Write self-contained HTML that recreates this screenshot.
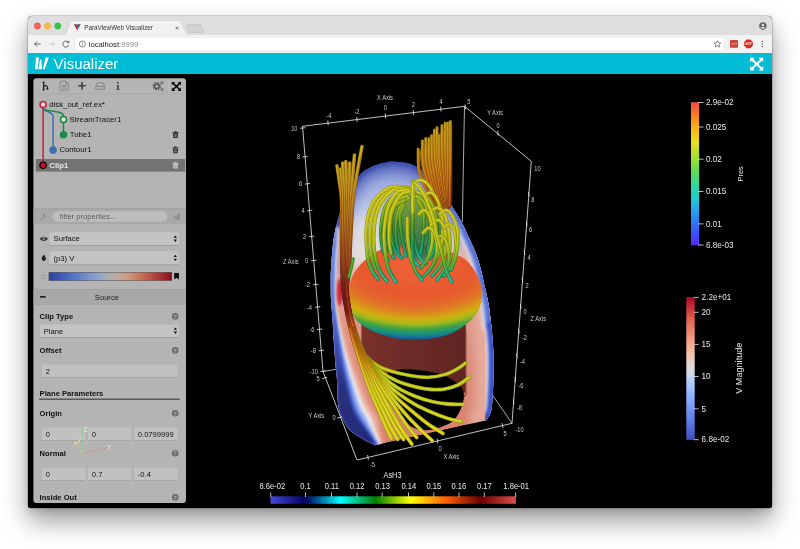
<!DOCTYPE html>
<html>
<head>
<meta charset="utf-8">
<title>ParaViewWeb Visualizer</title>
<style>
html,body{margin:0;padding:0;background:#fff;}
body{width:800px;height:549px;overflow:hidden;position:relative;font-family:"Liberation Sans",sans-serif;}
#win{position:absolute;left:28px;top:16px;width:743.5px;height:492px;background:#000;border-radius:4px 4px 2.5px 2.5px;box-shadow:0 13px 26px 0 rgba(0,0,0,.40),0 0 0 .5px rgba(0,0,0,.25),0 3px 7px rgba(0,0,0,.12);overflow:hidden;}
#in{will-change:transform;position:absolute;left:-28px;top:-16px;width:800px;height:549px;}
#in div,#in svg{position:absolute;}
#tabbar{left:28px;top:16px;width:745px;height:19px;background:#dedede;}
#toolbar{left:28px;top:35px;width:745px;height:18px;background:#f2f2f2;}
#hdr{left:28px;top:53.4px;width:745px;height:20.8px;background:#00bcd4;}
.tl{top:22.8px;width:6.4px;height:6.4px;border-radius:50%;}
#url{left:75px;top:37.3px;width:649.2px;height:13.4px;background:#fff;border-radius:2px;box-shadow:0 0 0 .5px rgba(0,0,0,.12);}
#in .t{white-space:nowrap;color:#151515;line-height:1;}
.b{font-weight:bold;}
.sel{background:#c3c3c3;border-radius:2px;box-shadow:0 1px 1px rgba(0,0,0,.3);}
.inp{background:#c1c1c1;box-shadow:0 1px 0 rgba(0,0,0,.2);}
.q{width:6.6px;height:6.6px;border-radius:50%;background:#6e6e6e;color:#b9b9b9;font-size:6px;font-weight:bold;text-align:center;line-height:7px;}
</style>
</head>
<body>
<div id="win"><div id="in">
<div id="tabbar"></div>
<div id="toolbar"></div>
<div id="hdr"></div>
<svg style="left:0;top:0" width="800" height="80" viewBox="0 0 800 80">
  <!-- active tab -->
  <path d="M62 35 C65.5 35 66 33 67.2 30 L70.2 22.5 C71 20.8 71.6 20.5 73.5 20.5 L178 20.5 C180 20.5 180.6 20.8 181.4 22.5 L184.6 30 C185.8 33 186.3 35 190 35 Z" fill="#f2f2f2" stroke="#c4c4c4" stroke-width=".5"/>
  <rect x="62" y="34.7" width="130" height="1" fill="#f2f2f2"/>
  <!-- new tab button -->
  <path d="M187 24.6 L199.6 24.6 C200.6 24.6 201 24.9 201.4 25.8 L203.6 31 C204 32 203.6 32.6 202.6 32.6 L190.6 32.6 C189.6 32.6 189.2 32.3 188.8 31.4 L186.4 25.8 C186.1 25 186.3 24.6 187 24.6Z" fill="#d2d2d2" stroke="#bdbdbd" stroke-width=".5"/>
  <!-- traffic lights -->
  <circle cx="37.4" cy="26" r="3.15" fill="#fc605b" stroke="#df4744" stroke-width=".4"/>
  <circle cx="47.6" cy="26" r="3.15" fill="#fdbc40" stroke="#de9f34" stroke-width=".4"/>
  <circle cx="57.8" cy="26" r="3.15" fill="#34c84a" stroke="#27aa35" stroke-width=".4"/>
  <!-- favicon -->
  <g transform="translate(74,24.3)">
    <path d="M0 0 L2.2 0 L3.6 4.2 L3.2 6.3Z" fill="#c8102e"/>
    <path d="M2.2 0 L4.3 0 L4.3 2.9 L3.6 4.2Z" fill="#1f7a3a"/>
    <path d="M4.3 0 L6.8 0 L3.2 6.3 L3.6 4.2 L4.3 2.9Z" fill="#2c4fa3"/>
  </g>
  <text x="84.3" y="30" font-family="Liberation Sans, sans-serif" font-size="6.3" fill="#333">ParaViewWeb Visualizer</text>
  <path d="M175.6 26.7 l2.8 2.8 m0 -2.8 l-2.8 2.8" stroke="#5a5a5a" stroke-width=".75" fill="none"/>
  <!-- profile icon -->
  <circle cx="762.9" cy="26" r="3.7" fill="#5f6368"/>
  <circle cx="762.9" cy="24.9" r="1.25" fill="#dedede"/>
  <path d="M760.4 28.2 C760.4 26.6 765.4 26.6 765.4 28.2 L765.4 28.6 L760.4 28.6Z" fill="#dedede"/>
  <!-- url box -->
  <rect x="75" y="37.3" width="649.2" height="13.4" rx="2" fill="#fff" stroke="#dcdcdc" stroke-width=".5"/>
  <!-- nav arrows -->
  <path d="M40.6 44 L34.6 44 M37.2 41.3 L34.5 44 L37.2 46.7" stroke="#5a5a5a" stroke-width=".9" fill="none"/>
  <path d="M48.6 44 L54.6 44 M52 41.3 L54.7 44 L52 46.7" stroke="#c9c9c9" stroke-width=".9" fill="none"/>
  <path d="M68.3 42.4 A3 3 0 1 0 68.7 45" stroke="#5a5a5a" stroke-width=".9" fill="none"/>
  <path d="M69.2 40.6 L69.2 43.1 L66.7 43.1Z" fill="#5a5a5a"/>
  <!-- info icon -->
  <circle cx="82.4" cy="44" r="3" fill="none" stroke="#5a5a5a" stroke-width=".7"/>
  <path d="M82.4 43.5 v2.2 M82.4 42.1 v.7" stroke="#5a5a5a" stroke-width=".7"/>
  <text x="88.8" y="46.7" font-family="Liberation Sans, sans-serif" font-size="7.66" fill="#222">localhost<tspan fill="#8a8a8a">:9999</tspan></text>
  <!-- star -->
  <path d="M717.4 40.6 l1 2.2 2.4 .25 -1.8 1.6 .5 2.4 -2.1 -1.25 -2.1 1.25 .5 -2.4 -1.8 -1.6 2.4 -.25z" fill="none" stroke="#5a5a5a" stroke-width=".7" stroke-linejoin="round"/>
  <!-- extension red -->
  <rect x="730" y="39.9" width="8" height="7.8" rx="1" fill="#c8473c"/>
  <path d="M731.6 43.8 h1.2 m.8 0 h1.2 m.8 0 h1.2" stroke="#f4d6d2" stroke-width="1"/>
  <!-- abp -->
  <path d="M746.7 39.6 h3.6 l2.5 2.5 v3.6 l-2.5 2.5 h-3.6 l-2.5 -2.5 v-3.6z" fill="#d9291c"/>
  <text x="748.5" y="45" text-anchor="middle" font-family="Liberation Sans, sans-serif" font-size="3.4" font-weight="bold" fill="#f6c9c4">ABP</text>
  <!-- menu dots -->
  <circle cx="762.3" cy="41.4" r=".75" fill="#5a5a5a"/><circle cx="762.3" cy="44" r=".75" fill="#5a5a5a"/><circle cx="762.3" cy="46.6" r=".75" fill="#5a5a5a"/>
  <!-- header logo -->
  <g fill="#fff">
    <path d="M36 57.4 L39 57.4 L37.5 69.3 L35 69.3Z"/>
    <path d="M40.1 59.5 L41.4 59.5 L41.9 69.3 L38.3 69.3Z"/>
    <path d="M45.5 57.4 L48.8 57.4 L44.8 69.3 L42.7 69.3Z"/>
  </g>
  <text x="53.6" y="68.9" font-family="Liberation Sans, sans-serif" font-size="15" fill="#fff">Visualizer</text>
  <!-- expand icon -->
  <g fill="#fff" stroke="none">
    <path d="M750.1 57.7 h4.6 l-1.5 1.5 3.5 3.4 3.5 -3.4 -1.5 -1.5 h4.6 v4.6 l-1.5 -1.5 -3.5 3.3 3.5 3.3 1.5 -1.5 v4.6 h-4.6 l1.5 -1.5 -3.5 -3.4 -3.5 3.4 1.5 1.5 h-4.6 v-4.6 l1.5 1.5 3.5 -3.3 -3.5 -3.3 -1.5 1.5z"/>
  </g>
</svg>
<svg style="left:0;top:0" width="800" height="549" viewBox="0 0 800 549" font-family="Liberation Sans, sans-serif">
<defs>
<clipPath id="shellclip"><path d="M390.4 161.4 C393.3 161.7 403.1 161.9 408.0 163.2 C412.9 164.4 415.5 165.9 420.0 168.9 C424.5 171.9 429.9 175.2 435.0 181.0 C440.1 186.8 446.2 197.4 450.5 204.0 C454.8 210.6 457.3 214.5 460.5 220.3 C463.7 226.1 466.8 233.2 469.5 239.0 C472.2 244.8 474.5 249.5 476.5 255.0 C478.5 260.5 480.1 266.5 481.5 272.0 C482.9 277.5 483.8 282.5 485.0 288.0 C486.2 293.5 487.7 298.8 488.7 305.0 C489.7 311.2 490.5 318.3 491.2 325.0 C492.0 331.7 492.6 338.3 493.0 345.0 C493.4 351.7 493.6 358.3 493.6 365.0 C493.6 371.7 493.4 379.2 493.2 385.0 C493.0 390.8 492.8 395.6 492.4 400.0 C492.0 404.4 492.0 408.1 491.0 411.5 C490.0 414.9 487.2 418.8 486.5 420.3 L375.3 445.3 C373.2 444.2 366.9 441.5 362.7 439.0 C358.5 436.5 353.4 433.9 350.0 430.3 C346.6 426.8 344.0 421.9 342.0 417.7 C340.0 413.5 339.0 411.3 338.2 405.0 C337.4 398.7 337.4 386.7 337.0 380.0 C336.6 373.3 336.0 370.8 335.5 365.0 C335.0 359.2 334.5 352.5 334.0 345.0 C333.5 337.5 333.0 327.5 332.5 320.0 C332.0 312.5 331.3 305.8 331.0 300.0 C330.7 294.2 330.7 290.2 330.7 285.0 C330.7 279.8 330.5 276.5 331.0 269.0 C331.5 261.5 332.2 248.8 333.5 240.0 C334.8 231.2 336.4 223.8 338.8 216.0 C341.2 208.2 344.2 200.1 348.0 193.0 C351.8 185.9 356.8 178.0 361.5 173.3 C366.2 168.6 371.2 167.0 376.0 165.0 C380.8 163.0 388.0 162.0 390.4 161.4Z"/></clipPath>
<filter id="b1" x="-20%" y="-20%" width="140%" height="140%"><feGaussianBlur stdDeviation="1"/></filter>
<filter id="b15" x="-20%" y="-20%" width="140%" height="140%"><feGaussianBlur stdDeviation="1.5"/></filter>
<filter id="b2" x="-20%" y="-20%" width="140%" height="140%"><feGaussianBlur stdDeviation="2.2"/></filter>
<filter id="b4" x="-30%" y="-30%" width="160%" height="160%"><feGaussianBlur stdDeviation="4"/></filter>
<filter id="b7" x="-30%" y="-30%" width="160%" height="160%"><feGaussianBlur stdDeviation="7"/></filter>
<filter id="soft" x="-5%" y="-5%" width="110%" height="110%"><feGaussianBlur stdDeviation="0.45"/></filter>
<linearGradient id="shellbase" gradientUnits="userSpaceOnUse" x1="0" y1="161" x2="0" y2="445">
<stop offset="0" stop-color="#7c8ed4"/><stop offset=".085" stop-color="#a2b0e2"/><stop offset=".155" stop-color="#bac4e8"/><stop offset=".243" stop-color="#d2d5e6"/><stop offset=".33" stop-color="#e2d4d0"/><stop offset=".42" stop-color="#e8b8a8"/><stop offset=".525" stop-color="#e0988a"/><stop offset="1" stop-color="#d87e6c"/></linearGradient>
<radialGradient id="diskg" gradientUnits="userSpaceOnUse" cx="416" cy="262" r="78" gradientTransform="translate(416 262) scale(1.73 1) translate(-416 -262)">
<stop offset="0" stop-color="#ee5e34"/><stop offset=".42" stop-color="#e8582f"/><stop offset=".55" stop-color="#e4662c"/><stop offset=".64" stop-color="#e07e24"/><stop offset=".74" stop-color="#d2ae10"/><stop offset=".80" stop-color="#a4b81c"/><stop offset=".86" stop-color="#44a440"/><stop offset=".94" stop-color="#0f8a8c"/><stop offset=".985" stop-color="#1c5a9c"/><stop offset="1" stop-color="#203e84"/></radialGradient>
<linearGradient id="cylg" gradientUnits="userSpaceOnUse" x1="361" y1="0" x2="467" y2="0"><stop offset="0" stop-color="#7a322c"/><stop offset=".5" stop-color="#6c2a26"/><stop offset="1" stop-color="#5e2522"/></linearGradient>
<linearGradient id="lb" gradientUnits="userSpaceOnUse" x1="0" y1="146" x2="0" y2="445">
<stop offset="0" stop-color="#ba9a0e"/><stop offset=".12" stop-color="#b08410"/><stop offset=".25" stop-color="#9c5a12"/><stop offset=".38" stop-color="#8c3e14"/><stop offset=".48" stop-color="#7e2016"/><stop offset=".555" stop-color="#8a2416"/><stop offset=".61" stop-color="#b85016"/><stop offset=".68" stop-color="#cc7814"/><stop offset=".75" stop-color="#cfa012"/><stop offset=".82" stop-color="#ccc012"/><stop offset="1" stop-color="#d4cc10"/></linearGradient>
<linearGradient id="lbh" gradientUnits="userSpaceOnUse" x1="0" y1="146" x2="0" y2="445">
<stop offset="0" stop-color="#dcc03c"/><stop offset=".25" stop-color="#c88a30"/><stop offset=".45" stop-color="#a84428"/><stop offset=".55" stop-color="#a83828"/><stop offset=".64" stop-color="#eaa030"/><stop offset=".7" stop-color="#d8e040"/><stop offset="1" stop-color="#f0ec50"/></linearGradient>
<linearGradient id="rb" gradientUnits="userSpaceOnUse" x1="418" y1="120" x2="452" y2="215">
<stop offset="0" stop-color="#b8960e"/><stop offset=".3" stop-color="#b8840e"/><stop offset=".55" stop-color="#bc680e"/><stop offset=".75" stop-color="#ac4a0e"/><stop offset="1" stop-color="#8e300e"/></linearGradient>
<linearGradient id="fy" gradientUnits="userSpaceOnUse" x1="0" y1="181" x2="0" y2="285">
<stop offset="0" stop-color="#c4be10"/><stop offset=".48" stop-color="#bcb80e"/><stop offset=".66" stop-color="#a2b014"/><stop offset=".79" stop-color="#5aa020"/><stop offset=".9" stop-color="#1c9a60"/><stop offset="1" stop-color="#10b89c"/></linearGradient>
<linearGradient id="fyh" gradientUnits="userSpaceOnUse" x1="0" y1="181" x2="0" y2="285">
<stop offset="0" stop-color="#e0dc40"/><stop offset=".4" stop-color="#dad83c"/><stop offset=".6" stop-color="#c4d840"/><stop offset=".78" stop-color="#70c050"/><stop offset="1" stop-color="#40e0c0"/></linearGradient>
<linearGradient id="fg" gradientUnits="userSpaceOnUse" x1="0" y1="190" x2="0" y2="262">
<stop offset="0" stop-color="#a8b814"/><stop offset=".3" stop-color="#7aa416"/><stop offset=".55" stop-color="#3a8a20"/><stop offset=".8" stop-color="#128a58"/><stop offset="1" stop-color="#10a890"/></linearGradient>
<linearGradient id="massg" gradientUnits="userSpaceOnUse" x1="0" y1="188" x2="0" y2="262">
<stop offset="0" stop-color="#86a014"/><stop offset=".4" stop-color="#3e7c18"/><stop offset=".7" stop-color="#16602c"/><stop offset="1" stop-color="#0c8670"/></linearGradient>
<linearGradient id="lbd" gradientUnits="userSpaceOnUse" x1="0" y1="146" x2="0" y2="445">
<stop offset="0" stop-color="#8a6c08"/><stop offset=".2" stop-color="#84520c"/><stop offset=".4" stop-color="#6c2c0e"/><stop offset=".48" stop-color="#5a1410"/><stop offset=".555" stop-color="#601810"/><stop offset=".62" stop-color="#9a4a0c"/><stop offset=".72" stop-color="#946808"/><stop offset=".82" stop-color="#989408"/><stop offset="1" stop-color="#a49c08"/></linearGradient>
<linearGradient id="lbg" gradientUnits="userSpaceOnUse" x1="0" y1="146" x2="0" y2="445">
<stop offset="0" stop-color="#c9a412"/><stop offset=".5" stop-color="#7e2016"/><stop offset=".575" stop-color="#8a3a14"/><stop offset=".615" stop-color="#5a901a"/><stop offset=".66" stop-color="#7cb018"/><stop offset=".73" stop-color="#b0c414"/><stop offset="1" stop-color="#c8cc12"/></linearGradient>
<linearGradient id="rbd" gradientUnits="userSpaceOnUse" x1="418" y1="120" x2="452" y2="215">
<stop offset="0" stop-color="#8c6c08"/><stop offset=".5" stop-color="#905408"/><stop offset="1" stop-color="#702808"/></linearGradient>
<linearGradient id="fyd" gradientUnits="userSpaceOnUse" x1="0" y1="181" x2="0" y2="285">
<stop offset="0" stop-color="#9a9408"/><stop offset=".5" stop-color="#8c8c08"/><stop offset=".68" stop-color="#6a800c"/><stop offset=".8" stop-color="#2e7018"/><stop offset=".9" stop-color="#0e6c48"/><stop offset="1" stop-color="#0a8470"/></linearGradient>
<linearGradient id="fgd" gradientUnits="userSpaceOnUse" x1="0" y1="190" x2="0" y2="262">
<stop offset="0" stop-color="#747e0c"/><stop offset=".3" stop-color="#4c700e"/><stop offset=".55" stop-color="#225c14"/><stop offset=".8" stop-color="#0a5c3c"/><stop offset="1" stop-color="#0a7464"/></linearGradient>
<linearGradient id="fgh" gradientUnits="userSpaceOnUse" x1="0" y1="190" x2="0" y2="262">
<stop offset="0" stop-color="#ccd840"/><stop offset=".4" stop-color="#90c038"/><stop offset=".7" stop-color="#48a848"/><stop offset="1" stop-color="#30d0b0"/></linearGradient>
<linearGradient id="navyg" gradientUnits="userSpaceOnUse" x1="0" y1="228" x2="0" y2="446"><stop offset="0" stop-color="#6c82d6"/><stop offset=".3" stop-color="#5a70cc"/><stop offset=".45" stop-color="#4a5ec0"/><stop offset=".6" stop-color="#3846a4"/><stop offset=".72" stop-color="#28327f"/><stop offset="1" stop-color="#232b78"/></linearGradient>
<linearGradient id="navyg2" gradientUnits="userSpaceOnUse" x1="0" y1="228" x2="0" y2="446"><stop offset="0" stop-color="#8096e0"/><stop offset=".3" stop-color="#7088dc"/><stop offset=".5" stop-color="#4a5cc8"/><stop offset="1" stop-color="#3b4cc0"/></linearGradient>
<linearGradient id="lgA" x1="0" y1="0" x2="1" y2="0"><stop offset="0" stop-color="#4747db"/><stop offset=".143" stop-color="#00005c"/><stop offset=".285" stop-color="#00ffff"/><stop offset=".429" stop-color="#008000"/><stop offset=".571" stop-color="#ffff00"/><stop offset=".714" stop-color="#ff6100"/><stop offset=".857" stop-color="#6b0000"/><stop offset="1" stop-color="#e04d4d"/></linearGradient>
<linearGradient id="lgP" x1="0" y1="1" x2="0" y2="0"><stop offset="0" stop-color="#5a2df0"/><stop offset=".08" stop-color="#3a50f8"/><stop offset=".2" stop-color="#2a8cf0"/><stop offset=".32" stop-color="#20c8d8"/><stop offset=".42" stop-color="#30d8a0"/><stop offset=".52" stop-color="#60dc50"/><stop offset=".62" stop-color="#a8e030"/><stop offset=".72" stop-color="#e8e020"/><stop offset=".82" stop-color="#f8b418"/><stop offset=".92" stop-color="#f87820"/><stop offset="1" stop-color="#f04848"/></linearGradient>
<linearGradient id="lgV" x1="0" y1="1" x2="0" y2="0"><stop offset="0" stop-color="#3b4cc0"/><stop offset=".15" stop-color="#6282ea"/><stop offset=".3" stop-color="#8db0fe"/><stop offset=".42" stop-color="#b8d0f9"/><stop offset=".5" stop-color="#dddddd"/><stop offset=".6" stop-color="#f5c4ad"/><stop offset=".72" stop-color="#f4987a"/><stop offset=".85" stop-color="#de604d"/><stop offset="1" stop-color="#b40426"/></linearGradient>
</defs>
<g stroke="#e2e2e2" stroke-width=".8" fill="none" opacity=".95">
<path d="M464.5 106.3 L462.3 222"/>
<path d="M323 371.4 L336 369.4"/>
<path d="M512 423.3 L492.4 395"/>
</g>
<g clip-path="url(#shellclip)">
<path d="M390.4 161.4 C393.3 161.7 403.1 161.9 408.0 163.2 C412.9 164.4 415.5 165.9 420.0 168.9 C424.5 171.9 429.9 175.2 435.0 181.0 C440.1 186.8 446.2 197.4 450.5 204.0 C454.8 210.6 457.3 214.5 460.5 220.3 C463.7 226.1 466.8 233.2 469.5 239.0 C472.2 244.8 474.5 249.5 476.5 255.0 C478.5 260.5 480.1 266.5 481.5 272.0 C482.9 277.5 483.8 282.5 485.0 288.0 C486.2 293.5 487.7 298.8 488.7 305.0 C489.7 311.2 490.5 318.3 491.2 325.0 C492.0 331.7 492.6 338.3 493.0 345.0 C493.4 351.7 493.6 358.3 493.6 365.0 C493.6 371.7 493.4 379.2 493.2 385.0 C493.0 390.8 492.8 395.6 492.4 400.0 C492.0 404.4 492.0 408.1 491.0 411.5 C490.0 414.9 487.2 418.8 486.5 420.3 L375.3 445.3 C373.2 444.2 366.9 441.5 362.7 439.0 C358.5 436.5 353.4 433.9 350.0 430.3 C346.6 426.8 344.0 421.9 342.0 417.7 C340.0 413.5 339.0 411.3 338.2 405.0 C337.4 398.7 337.4 386.7 337.0 380.0 C336.6 373.3 336.0 370.8 335.5 365.0 C335.0 359.2 334.5 352.5 334.0 345.0 C333.5 337.5 333.0 327.5 332.5 320.0 C332.0 312.5 331.3 305.8 331.0 300.0 C330.7 294.2 330.7 290.2 330.7 285.0 C330.7 279.8 330.5 276.5 331.0 269.0 C331.5 261.5 332.2 248.8 333.5 240.0 C334.8 231.2 336.4 223.8 338.8 216.0 C341.2 208.2 344.2 200.1 348.0 193.0 C351.8 185.9 356.8 178.0 361.5 173.3 C366.2 168.6 371.2 167.0 376.0 165.0 C380.8 163.0 388.0 162.0 390.4 161.4Z" fill="url(#shellbase)"/>
<ellipse cx="366" cy="246" rx="20" ry="30" fill="#e4e2e4" opacity=".55" filter="url(#b7)"/>
<ellipse cx="352" cy="288" rx="12" ry="26" fill="#ecb8a8" opacity=".7" filter="url(#b4)"/>
<path d="M331.0 275.0 C331.0 272.8 330.6 267.8 331.0 262.0 C331.4 256.2 332.2 247.7 333.5 240.0 C334.8 232.3 336.4 223.8 338.8 216.0 C341.2 208.2 344.2 200.1 348.0 193.0 C351.8 185.9 356.8 178.0 361.5 173.3 C366.2 168.6 371.2 167.0 376.0 165.0 C380.8 163.0 385.1 161.7 390.4 161.4 C395.7 161.1 403.1 161.9 408.0 163.2 C412.9 164.4 415.5 165.9 420.0 168.9 C424.5 171.9 429.9 175.2 435.0 181.0 C440.1 186.8 446.2 197.4 450.5 204.0 C454.8 210.6 457.3 214.5 460.5 220.3 C463.7 226.1 466.8 233.2 469.5 239.0 C472.2 244.8 475.3 252.3 476.5 255.0" fill="none" stroke="#3f4fb0" stroke-width="17" filter="url(#b7)" opacity=".78"/>
<path d="M331.0 275.0 C331.0 272.8 330.6 267.8 331.0 262.0 C331.4 256.2 332.2 247.7 333.5 240.0 C334.8 232.3 336.4 223.8 338.8 216.0 C341.2 208.2 344.2 200.1 348.0 193.0 C351.8 185.9 356.8 178.0 361.5 173.3 C366.2 168.6 371.2 167.0 376.0 165.0 C380.8 163.0 385.1 161.7 390.4 161.4 C395.7 161.1 403.1 161.9 408.0 163.2 C412.9 164.4 415.5 165.9 420.0 168.9 C424.5 171.9 429.9 175.2 435.0 181.0 C440.1 186.8 446.2 197.4 450.5 204.0 C454.8 210.6 457.3 214.5 460.5 220.3 C463.7 226.1 466.8 233.2 469.5 239.0 C472.2 244.8 475.3 252.3 476.5 255.0" fill="none" stroke="#3a4aae" stroke-width="6.5" filter="url(#b2)"/>
<g stroke-linecap="round" fill="none">
<path d="M469.5 239.0 C470.7 241.7 474.5 249.5 476.5 255.0 C478.5 260.5 480.1 266.5 481.5 272.0 C482.9 277.5 483.8 282.5 485.0 288.0 C486.2 293.5 487.7 298.8 488.7 305.0 C489.7 311.2 490.5 318.3 491.2 325.0 C492.0 331.7 492.6 338.3 493.0 345.0 C493.4 351.7 493.6 358.3 493.6 365.0 C493.6 371.7 493.4 379.2 493.2 385.0 C493.0 390.8 492.8 395.6 492.4 400.0 C492.0 404.4 492.0 408.1 491.0 411.5 C490.0 414.9 487.2 418.8 486.5 420.3" stroke="#e8b2a2" stroke-width="36" filter="url(#b4)" opacity=".8"/>
<path d="M460.5 220.3 C462.0 223.4 466.8 233.2 469.5 239.0 C472.2 244.8 474.5 249.5 476.5 255.0 C478.5 260.5 480.1 266.5 481.5 272.0 C482.9 277.5 483.8 282.5 485.0 288.0 C486.2 293.5 487.7 298.8 488.7 305.0 C489.7 311.2 490.8 321.7 491.2 325.0" stroke="#e6e0e6" stroke-width="17" filter="url(#b2)"/>
<path d="M488.7 305.0 C489.1 308.3 490.5 318.3 491.2 325.0 C492.0 331.7 492.6 338.3 493.0 345.0 C493.4 351.7 493.6 358.3 493.6 365.0 C493.6 371.7 493.4 379.2 493.2 385.0 C493.0 390.8 492.8 395.6 492.4 400.0 C492.0 404.4 492.0 408.1 491.0 411.5 C490.0 414.9 487.2 418.8 486.5 420.3" stroke="#ece6ea" stroke-width="14" filter="url(#b2)"/>
<path d="M450.5 204.0 C452.2 206.7 457.3 214.5 460.5 220.3 C463.7 226.1 466.8 233.2 469.5 239.0 C472.2 244.8 474.5 249.5 476.5 255.0 C478.5 260.5 480.1 266.5 481.5 272.0 C482.9 277.5 483.8 282.5 485.0 288.0 C486.2 293.5 487.7 298.8 488.7 305.0 C489.7 311.2 490.8 321.7 491.2 325.0" stroke="#94a8ec" stroke-width="12" filter="url(#b15)"/>
<path d="M491.2 325.0 C491.5 328.3 492.6 338.3 493.0 345.0 C493.4 351.7 493.6 358.3 493.6 365.0 C493.6 371.7 493.4 379.2 493.2 385.0 C493.0 390.8 492.8 395.6 492.4 400.0 C492.0 404.4 492.0 408.1 491.0 411.5 C490.0 414.9 487.2 418.8 486.5 420.3" stroke="#7d96e6" stroke-width="11" filter="url(#b15)"/>
<path d="M450.5 204.0 C452.2 206.7 457.3 214.5 460.5 220.3 C463.7 226.1 466.8 233.2 469.5 239.0 C472.2 244.8 474.5 249.5 476.5 255.0 C478.5 260.5 480.1 266.5 481.5 272.0 C482.9 277.5 483.8 282.5 485.0 288.0 C486.2 293.5 487.7 298.8 488.7 305.0 C489.7 311.2 490.8 321.7 491.2 325.0" stroke="#566ed2" stroke-width="8" filter="url(#b15)"/>
<path d="M491.2 325.0 C491.5 328.3 492.6 338.3 493.0 345.0 C493.4 351.7 493.6 358.3 493.6 365.0 C493.6 371.7 493.4 379.2 493.2 385.0 C493.0 390.8 492.8 395.6 492.4 400.0 C492.0 404.4 492.0 408.1 491.0 411.5 C490.0 414.9 487.2 418.8 486.5 420.3" stroke="#3d55c4" stroke-width="8" filter="url(#b1)"/>
</g>
<path d="M335.0 228.0 C334.7 230.7 333.9 238.3 333.2 244.0 C332.5 249.7 331.4 255.2 331.0 262.0 C330.6 268.8 330.7 278.7 330.7 285.0 C330.7 291.3 330.7 294.2 331.0 300.0 C331.3 305.8 332.0 312.5 332.5 320.0 C333.0 327.5 333.5 337.5 334.0 345.0 C334.5 352.5 335.0 359.2 335.5 365.0 C336.0 370.8 336.6 373.3 337.0 380.0 C337.4 386.7 337.4 398.7 338.2 405.0 C339.0 411.3 340.0 413.5 342.0 417.7 C344.0 421.9 346.6 426.8 350.0 430.3 C353.4 433.9 358.5 436.5 362.7 439.0 C366.9 441.5 373.2 444.2 375.3 445.3 L384.0 446.0 C383.3 443.4 381.0 435.0 379.8 430.3 C378.7 425.6 379.0 421.9 377.3 417.7 C375.6 413.5 372.5 411.3 369.5 405.0 C366.5 398.7 361.7 386.7 359.0 380.0 C356.4 373.3 355.4 370.8 353.4 365.0 C351.3 359.2 348.8 352.5 346.5 345.0 C344.2 337.5 341.2 327.5 339.7 320.0 C338.2 312.5 337.8 309.7 337.4 300.0 C337.0 290.3 337.3 271.3 337.6 262.0 C337.9 252.7 338.8 249.7 339.2 244.0 C339.6 238.3 339.7 230.7 339.8 228.0Z" fill="#ecb09e" filter="url(#b2)"/>
<path d="M335.0 228.0 C334.7 230.7 333.9 238.3 333.2 244.0 C332.5 249.7 331.4 255.2 331.0 262.0 C330.6 268.8 330.7 278.7 330.7 285.0 C330.7 291.3 330.7 294.2 331.0 300.0 C331.3 305.8 332.0 312.5 332.5 320.0 C333.0 327.5 333.5 337.5 334.0 345.0 C334.5 352.5 335.0 359.2 335.5 365.0 C336.0 370.8 336.6 373.3 337.0 380.0 C337.4 386.7 337.4 398.7 338.2 405.0 C339.0 411.3 340.0 413.5 342.0 417.7 C344.0 421.9 346.6 426.8 350.0 430.3 C353.4 433.9 358.5 436.5 362.7 439.0 C366.9 441.5 373.2 444.2 375.3 445.3 L381.8 446.0 C380.8 443.4 377.4 435.0 375.6 430.3 C373.9 425.6 373.1 421.9 371.1 417.7 C369.2 413.5 366.7 411.3 364.0 405.0 C361.3 398.7 357.2 386.7 354.8 380.0 C352.5 373.3 351.7 370.8 349.9 365.0 C348.2 359.2 346.1 352.5 344.2 345.0 C342.2 337.5 339.7 327.5 338.4 320.0 C337.0 312.5 336.4 309.7 336.1 300.0 C335.7 290.3 336.0 271.3 336.3 262.0 C336.6 252.7 337.5 249.7 337.9 244.0 C338.2 238.3 338.4 230.7 338.5 228.0Z" fill="#e8e6ec" filter="url(#b15)"/>
<path d="M335.0 228.0 C334.7 230.7 333.9 238.3 333.2 244.0 C332.5 249.7 331.4 255.2 331.0 262.0 C330.6 268.8 330.7 278.7 330.7 285.0 C330.7 291.3 330.7 294.2 331.0 300.0 C331.3 305.8 332.0 312.5 332.5 320.0 C333.0 327.5 333.5 337.5 334.0 345.0 C334.5 352.5 335.0 359.2 335.5 365.0 C336.0 370.8 336.6 373.3 337.0 380.0 C337.4 386.7 337.4 398.7 338.2 405.0 C339.0 411.3 340.0 413.5 342.0 417.7 C344.0 421.9 346.6 426.8 350.0 430.3 C353.4 433.9 358.5 436.5 362.7 439.0 C366.9 441.5 373.2 444.2 375.3 445.3 L380.0 446.0 C378.7 443.4 374.5 435.0 372.2 430.3 C369.9 425.6 368.2 421.9 366.1 417.7 C364.0 413.5 361.9 411.3 359.5 405.0 C357.1 398.7 353.5 386.7 351.4 380.0 C349.4 373.3 348.7 370.8 347.1 365.0 C345.6 359.2 343.9 352.5 342.2 345.0 C340.6 337.5 338.5 327.5 337.3 320.0 C336.1 312.5 335.4 309.7 335.0 300.0 C334.6 290.3 334.9 271.3 335.2 262.0 C335.5 252.7 336.4 249.7 336.8 244.0 C337.2 238.3 337.3 230.7 337.4 228.0Z" fill="#9db4f0" filter="url(#b1)"/>
<path d="M335.0 228.0 C334.7 230.7 333.9 238.3 333.2 244.0 C332.5 249.7 331.4 255.2 331.0 262.0 C330.6 268.8 330.7 278.7 330.7 285.0 C330.7 291.3 330.7 294.2 331.0 300.0 C331.3 305.8 332.0 312.5 332.5 320.0 C333.0 327.5 333.5 337.5 334.0 345.0 C334.5 352.5 335.0 359.2 335.5 365.0 C336.0 370.8 336.6 373.3 337.0 380.0 C337.4 386.7 337.4 398.7 338.2 405.0 C339.0 411.3 340.0 413.5 342.0 417.7 C344.0 421.9 346.6 426.8 350.0 430.3 C353.4 433.9 358.5 436.5 362.7 439.0 C366.9 441.5 373.2 444.2 375.3 445.3 L378.6 446.0 C377.1 443.4 372.3 435.0 369.5 430.3 C366.8 425.6 364.4 421.9 362.2 417.7 C359.9 413.5 358.2 411.3 356.0 405.0 C353.8 398.7 350.6 386.7 348.8 380.0 C346.9 373.3 346.3 370.8 345.0 365.0 C343.6 359.2 342.1 352.5 340.7 345.0 C339.3 337.5 337.6 327.5 336.5 320.0 C335.4 312.5 334.5 309.7 334.2 300.0 C333.8 290.3 334.1 271.3 334.4 262.0 C334.7 252.7 335.6 249.7 336.0 244.0 C336.3 238.3 336.5 230.7 336.6 228.0Z" fill="#5f7ede" filter="url(#b1)"/>
<path d="M335.0 228.0 C334.7 230.7 333.9 238.3 333.2 244.0 C332.5 249.7 331.4 255.2 331.0 262.0 C330.6 268.8 330.7 278.7 330.7 285.0 C330.7 291.3 330.7 294.2 331.0 300.0 C331.3 305.8 332.0 312.5 332.5 320.0 C333.0 327.5 333.5 337.5 334.0 345.0 C334.5 352.5 335.0 359.2 335.5 365.0 C336.0 370.8 336.6 373.3 337.0 380.0 C337.4 386.7 337.4 398.7 338.2 405.0 C339.0 411.3 340.0 413.5 342.0 417.7 C344.0 421.9 346.6 426.8 350.0 430.3 C353.4 433.9 358.5 436.5 362.7 439.0 C366.9 441.5 373.2 444.2 375.3 445.3 L377.5 446.0 C375.8 443.4 370.5 435.0 367.4 430.3 C364.3 425.6 361.4 421.9 359.0 417.7 C356.7 413.5 355.3 411.3 353.2 405.0 C351.1 398.7 348.3 386.7 346.6 380.0 C345.0 373.3 344.4 370.8 343.2 365.0 C342.1 359.2 340.8 352.5 339.5 345.0 C338.3 337.5 336.8 327.5 335.8 320.0 C334.8 312.5 333.8 309.7 333.5 300.0 C333.1 290.3 333.4 271.3 333.7 262.0 C334.0 252.7 334.9 249.7 335.3 244.0 C335.7 238.3 335.8 230.7 335.9 228.0Z" fill="url(#navyg2)" filter="url(#b1)"/>
<path d="M335.0 228.0 C334.7 230.7 333.9 238.3 333.2 244.0 C332.5 249.7 331.4 255.2 331.0 262.0 C330.6 268.8 330.7 278.7 330.7 285.0 C330.7 291.3 330.7 294.2 331.0 300.0 C331.3 305.8 332.0 312.5 332.5 320.0 C333.0 327.5 333.5 337.5 334.0 345.0 C334.5 352.5 335.0 359.2 335.5 365.0 C336.0 370.8 336.6 373.3 337.0 380.0 C337.4 386.7 337.4 398.7 338.2 405.0 C339.0 411.3 340.0 413.5 342.0 417.7 C344.0 421.9 346.6 426.8 350.0 430.3 C353.4 433.9 358.5 436.5 362.7 439.0 C366.9 441.5 373.2 444.2 375.3 445.3 L376.4 446.0 C374.6 443.4 369.1 435.0 365.9 430.3 C362.7 425.6 359.5 421.9 357.1 417.7 C354.7 413.5 353.4 411.3 351.4 405.0 C349.4 398.7 346.7 386.7 345.1 380.0 C343.5 373.3 343.0 370.8 341.9 365.0 C340.8 359.2 339.6 352.5 338.4 345.0 C337.2 337.5 335.9 327.5 334.9 320.0 C333.9 312.5 332.9 309.7 332.6 300.0 C332.2 290.3 332.5 271.3 332.8 262.0 C333.1 252.7 334.0 249.7 334.4 244.0 C334.8 238.3 334.9 230.7 335.0 228.0Z" fill="url(#navyg)" filter="url(#b1)"/>
<ellipse cx="339.8" cy="292" rx="3" ry="14" fill="#c8243a" filter="url(#b15)"/>
</g>
<path d="M361.4 322.0 L465.8 322.0 L465.8 392.0 L452.0 398.0 L430.0 396.0 L400.0 386.0 L378.0 374.0 L361.4 362.0 Z" fill="url(#cylg)"/>
<path d="M465.8 330 L465.8 394 L461 402" stroke="#8a3c32" stroke-width="1.2" fill="none" filter="url(#soft)"/>
<path d="M415.5 369.7 C423.0 370.3 433.2 371.9 440.0 374.0 C446.8 376.1 452.1 379.5 456.0 382.5 C459.9 385.5 462.5 388.1 463.5 392.0 C464.5 395.9 463.6 401.3 462.0 406.0 C460.4 410.7 457.4 416.7 453.7 420.3 C450.0 423.9 444.8 425.8 440.0 427.5 C435.2 429.2 429.9 430.5 425.0 430.3 C420.1 430.1 415.2 428.8 410.7 426.2 C406.2 423.6 401.8 419.9 398.0 415.0 C394.2 410.1 390.2 403.2 388.0 397.0 C385.8 390.8 383.3 382.4 384.5 378.0 C385.7 373.6 389.8 371.9 395.0 370.5 C400.2 369.1 408.0 369.1 415.5 369.7Z" fill="#000"/>
<path d="M400.0 242.7 C405.3 241.6 407.8 242.8 412.0 243.2 C416.2 243.5 420.3 243.9 425.0 244.8 C429.7 245.7 435.0 247.0 440.0 248.5 C445.0 250.0 450.5 251.9 455.0 254.0 C459.5 256.1 463.5 257.8 467.0 261.0 C470.5 264.2 473.7 269.0 476.0 273.0 C478.3 277.0 479.9 281.3 481.0 285.0 C482.1 288.7 482.6 291.0 482.3 295.0 C482.0 299.0 481.1 304.7 479.0 309.0 C476.9 313.3 473.8 317.3 470.0 321.0 C466.2 324.7 461.0 328.3 456.0 331.0 C451.0 333.7 446.0 335.6 440.0 337.0 C434.0 338.4 426.7 339.3 420.0 339.6 C413.3 339.9 406.7 339.9 400.0 339.0 C393.3 338.1 386.3 336.3 380.0 334.0 C373.7 331.7 366.3 327.8 362.0 325.0 C357.7 322.2 356.1 320.0 354.0 317.0 C351.9 314.0 350.5 311.3 349.6 307.0 C348.7 302.7 348.2 296.3 348.8 291.0 C349.4 285.7 350.5 280.0 353.0 275.0 C355.5 270.0 359.5 265.2 364.0 261.0 C368.5 256.8 374.0 253.1 380.0 250.0 C386.0 246.9 394.7 243.8 400.0 242.7Z" fill="url(#diskg)"/>
<ellipse cx="425" cy="268" rx="38" ry="18" fill="#f06438" opacity=".5" filter="url(#b7)"/>
<g fill="none" stroke-linecap="round" stroke-linejoin="round" filter="url(#soft)">
<path d="M404 194 C394 194 385 206 382 226 L382 248 L392 256 L400 246 L406 240 L410 258 L428 260 L442 254 L448 238 C446 216 432 198 416 191 Z" fill="url(#massg)" stroke="none" opacity=".78" filter="url(#b2)"/>
<path d="M347.2 296.0 C347.8 299.2 349.1 308.8 350.6 315.0 C352.1 321.2 354.3 327.8 356.0 333.0 C357.7 338.2 359.3 342.2 361.0 346.0 C362.7 349.8 363.2 352.7 366.0 356.0 C368.8 359.3 373.7 363.4 378.0 366.0 C382.3 368.6 386.3 369.7 391.6 371.3 C396.9 372.9 404.0 374.5 410.0 375.5 C416.0 376.5 421.6 377.5 427.4 377.3 C433.2 377.1 439.9 376.0 445.0 374.5 C450.1 373.0 454.6 370.4 458.0 368.5 C461.4 366.6 464.3 363.9 465.6 363.0" stroke="url(#lbd)" stroke-width="3.8"/>
<path d="M347.2 296.0 C347.8 299.2 349.1 308.8 350.6 315.0 C352.1 321.2 354.3 327.8 356.0 333.0 C357.7 338.2 359.3 342.2 361.0 346.0 C362.7 349.8 363.2 352.7 366.0 356.0 C368.8 359.3 373.7 363.4 378.0 366.0 C382.3 368.6 386.3 369.7 391.6 371.3 C396.9 372.9 404.0 374.5 410.0 375.5 C416.0 376.5 421.6 377.5 427.4 377.3 C433.2 377.1 439.9 376.0 445.0 374.5 C450.1 373.0 454.6 370.4 458.0 368.5 C461.4 366.6 464.3 363.9 465.6 363.0" stroke="url(#lbg)" stroke-width="2.8"/>
<path d="M347.2 296.0 C347.8 299.2 349.1 308.8 350.6 315.0 C352.1 321.2 354.3 327.8 356.0 333.0 C357.7 338.2 359.3 342.2 361.0 346.0 C362.7 349.8 363.2 352.7 366.0 356.0 C368.8 359.3 373.7 363.4 378.0 366.0 C382.3 368.6 386.3 369.7 391.6 371.3 C396.9 372.9 404.0 374.5 410.0 375.5 C416.0 376.5 421.6 377.5 427.4 377.3 C433.2 377.1 439.9 376.0 445.0 374.5 C450.1 373.0 454.6 370.4 458.0 368.5 C461.4 366.6 464.3 363.9 465.6 363.0" stroke="url(#lbh)" stroke-width="1.2" transform="translate(-0.50 -0.15)" opacity=".62"/>
<path d="M346.9 296.0 C347.4 299.2 348.8 308.8 350.3 315.0 C351.7 321.2 353.8 327.8 355.5 333.0 C357.2 338.2 358.5 341.8 360.4 346.0 C362.3 350.2 363.7 353.8 367.0 358.0 C370.3 362.2 375.0 367.2 380.0 371.0 C385.0 374.8 391.1 378.4 397.0 381.0 C402.9 383.6 409.7 385.4 415.5 386.8 C421.3 388.2 427.2 389.1 432.0 389.5 C436.8 389.9 439.8 389.9 444.1 389.2 C448.4 388.4 453.8 387.0 458.0 385.0 C462.2 383.0 467.3 378.6 469.2 377.3" stroke="url(#lbd)" stroke-width="3.8"/>
<path d="M346.9 296.0 C347.4 299.2 348.8 308.8 350.3 315.0 C351.7 321.2 353.8 327.8 355.5 333.0 C357.2 338.2 358.5 341.8 360.4 346.0 C362.3 350.2 363.7 353.8 367.0 358.0 C370.3 362.2 375.0 367.2 380.0 371.0 C385.0 374.8 391.1 378.4 397.0 381.0 C402.9 383.6 409.7 385.4 415.5 386.8 C421.3 388.2 427.2 389.1 432.0 389.5 C436.8 389.9 439.8 389.9 444.1 389.2 C448.4 388.4 453.8 387.0 458.0 385.0 C462.2 383.0 467.3 378.6 469.2 377.3" stroke="url(#lbg)" stroke-width="2.8"/>
<path d="M346.9 296.0 C347.4 299.2 348.8 308.8 350.3 315.0 C351.7 321.2 353.8 327.8 355.5 333.0 C357.2 338.2 358.5 341.8 360.4 346.0 C362.3 350.2 363.7 353.8 367.0 358.0 C370.3 362.2 375.0 367.2 380.0 371.0 C385.0 374.8 391.1 378.4 397.0 381.0 C402.9 383.6 409.7 385.4 415.5 386.8 C421.3 388.2 427.2 389.1 432.0 389.5 C436.8 389.9 439.8 389.9 444.1 389.2 C448.4 388.4 453.8 387.0 458.0 385.0 C462.2 383.0 467.3 378.6 469.2 377.3" stroke="url(#lbh)" stroke-width="1.2" transform="translate(-0.50 -0.15)" opacity=".62"/>
<path d="M346.6 296.0 C347.1 299.2 348.5 308.8 350.0 315.0 C351.4 321.2 353.4 327.8 355.0 333.0 C356.7 338.2 357.6 341.5 359.8 346.0 C362.0 350.5 364.3 355.0 368.0 360.0 C371.7 365.0 377.0 371.3 382.0 376.0 C387.0 380.7 392.4 384.6 398.0 388.0 C403.6 391.4 409.8 394.1 415.5 396.4 C421.2 398.6 426.6 400.2 432.0 401.5 C437.4 402.8 442.9 403.5 448.0 404.0 C453.1 404.5 460.3 404.2 462.8 404.3" stroke="url(#lbd)" stroke-width="3.8"/>
<path d="M346.6 296.0 C347.1 299.2 348.5 308.8 350.0 315.0 C351.4 321.2 353.4 327.8 355.0 333.0 C356.7 338.2 357.6 341.5 359.8 346.0 C362.0 350.5 364.3 355.0 368.0 360.0 C371.7 365.0 377.0 371.3 382.0 376.0 C387.0 380.7 392.4 384.6 398.0 388.0 C403.6 391.4 409.8 394.1 415.5 396.4 C421.2 398.6 426.6 400.2 432.0 401.5 C437.4 402.8 442.9 403.5 448.0 404.0 C453.1 404.5 460.3 404.2 462.8 404.3" stroke="url(#lbg)" stroke-width="2.8"/>
<path d="M346.6 296.0 C347.1 299.2 348.5 308.8 350.0 315.0 C351.4 321.2 353.4 327.8 355.0 333.0 C356.7 338.2 357.6 341.5 359.8 346.0 C362.0 350.5 364.3 355.0 368.0 360.0 C371.7 365.0 377.0 371.3 382.0 376.0 C387.0 380.7 392.4 384.6 398.0 388.0 C403.6 391.4 409.8 394.1 415.5 396.4 C421.2 398.6 426.6 400.2 432.0 401.5 C437.4 402.8 442.9 403.5 448.0 404.0 C453.1 404.5 460.3 404.2 462.8 404.3" stroke="url(#lbh)" stroke-width="1.2" transform="translate(-0.50 -0.15)" opacity=".62"/>
<path d="M346.2 296.0 C346.8 299.2 348.3 308.8 349.6 315.0 C351.0 321.2 353.0 327.8 354.6 333.0 C356.2 338.2 356.8 341.2 359.2 346.0 C361.6 350.8 365.0 356.3 369.0 362.0 C373.0 367.7 378.0 374.7 383.0 380.0 C388.0 385.3 393.6 389.9 399.0 394.0 C404.4 398.1 410.0 401.6 415.5 404.7 C421.0 407.8 426.6 410.2 432.0 412.5 C437.4 414.8 443.1 417.0 448.0 418.5 C452.9 420.0 459.1 421.0 461.3 421.5" stroke="url(#lbd)" stroke-width="3.8"/>
<path d="M346.2 296.0 C346.8 299.2 348.3 308.8 349.6 315.0 C351.0 321.2 353.0 327.8 354.6 333.0 C356.2 338.2 356.8 341.2 359.2 346.0 C361.6 350.8 365.0 356.3 369.0 362.0 C373.0 367.7 378.0 374.7 383.0 380.0 C388.0 385.3 393.6 389.9 399.0 394.0 C404.4 398.1 410.0 401.6 415.5 404.7 C421.0 407.8 426.6 410.2 432.0 412.5 C437.4 414.8 443.1 417.0 448.0 418.5 C452.9 420.0 459.1 421.0 461.3 421.5" stroke="url(#lbg)" stroke-width="2.8"/>
<path d="M346.2 296.0 C346.8 299.2 348.3 308.8 349.6 315.0 C351.0 321.2 353.0 327.8 354.6 333.0 C356.2 338.2 356.8 341.2 359.2 346.0 C361.6 350.8 365.0 356.3 369.0 362.0 C373.0 367.7 378.0 374.7 383.0 380.0 C388.0 385.3 393.6 389.9 399.0 394.0 C404.4 398.1 410.0 401.6 415.5 404.7 C421.0 407.8 426.6 410.2 432.0 412.5 C437.4 414.8 443.1 417.0 448.0 418.5 C452.9 420.0 459.1 421.0 461.3 421.5" stroke="url(#lbh)" stroke-width="1.2" transform="translate(-0.50 -0.15)" opacity=".62"/>
<path d="M345.9 296.0 C346.5 299.2 348.0 308.8 349.3 315.0 C350.7 321.2 352.5 327.8 354.1 333.0 C355.6 338.2 356.0 340.8 358.6 346.0 C361.2 351.2 365.4 357.8 369.5 364.0 C373.6 370.2 378.2 377.2 383.0 383.0 C387.8 388.8 393.0 394.2 398.0 399.0 C403.0 403.8 408.0 407.8 413.0 412.0 C418.0 416.2 423.0 420.4 428.0 424.0 C433.0 427.6 440.4 431.8 442.9 433.4" stroke="url(#lbd)" stroke-width="3.8"/>
<path d="M345.9 296.0 C346.5 299.2 348.0 308.8 349.3 315.0 C350.7 321.2 352.5 327.8 354.1 333.0 C355.6 338.2 356.0 340.8 358.6 346.0 C361.2 351.2 365.4 357.8 369.5 364.0 C373.6 370.2 378.2 377.2 383.0 383.0 C387.8 388.8 393.0 394.2 398.0 399.0 C403.0 403.8 408.0 407.8 413.0 412.0 C418.0 416.2 423.0 420.4 428.0 424.0 C433.0 427.6 440.4 431.8 442.9 433.4" stroke="url(#lb)" stroke-width="2.8"/>
<path d="M345.9 296.0 C346.5 299.2 348.0 308.8 349.3 315.0 C350.7 321.2 352.5 327.8 354.1 333.0 C355.6 338.2 356.0 340.8 358.6 346.0 C361.2 351.2 365.4 357.8 369.5 364.0 C373.6 370.2 378.2 377.2 383.0 383.0 C387.8 388.8 393.0 394.2 398.0 399.0 C403.0 403.8 408.0 407.8 413.0 412.0 C418.0 416.2 423.0 420.4 428.0 424.0 C433.0 427.6 440.4 431.8 442.9 433.4" stroke="url(#lbh)" stroke-width="1.2" transform="translate(-0.50 -0.15)" opacity=".62"/>
<path d="M345.6 296.0 C346.2 299.2 347.7 308.8 349.0 315.0 C350.3 321.2 352.1 327.8 353.6 333.0 C355.1 338.2 355.3 340.5 358.0 346.0 C360.7 351.5 365.8 359.3 370.0 366.0 C374.2 372.7 378.5 379.7 383.0 386.0 C387.5 392.3 392.5 398.5 397.0 404.0 C401.5 409.5 405.8 414.5 410.0 419.0 C414.2 423.5 418.3 427.4 422.0 431.0 C425.7 434.6 430.5 439.0 432.2 440.6" stroke="url(#lbd)" stroke-width="3.8"/>
<path d="M345.6 296.0 C346.2 299.2 347.7 308.8 349.0 315.0 C350.3 321.2 352.1 327.8 353.6 333.0 C355.1 338.2 355.3 340.5 358.0 346.0 C360.7 351.5 365.8 359.3 370.0 366.0 C374.2 372.7 378.5 379.7 383.0 386.0 C387.5 392.3 392.5 398.5 397.0 404.0 C401.5 409.5 405.8 414.5 410.0 419.0 C414.2 423.5 418.3 427.4 422.0 431.0 C425.7 434.6 430.5 439.0 432.2 440.6" stroke="url(#lb)" stroke-width="2.8"/>
<path d="M345.6 296.0 C346.2 299.2 347.7 308.8 349.0 315.0 C350.3 321.2 352.1 327.8 353.6 333.0 C355.1 338.2 355.3 340.5 358.0 346.0 C360.7 351.5 365.8 359.3 370.0 366.0 C374.2 372.7 378.5 379.7 383.0 386.0 C387.5 392.3 392.5 398.5 397.0 404.0 C401.5 409.5 405.8 414.5 410.0 419.0 C414.2 423.5 418.3 427.4 422.0 431.0 C425.7 434.6 430.5 439.0 432.2 440.6" stroke="url(#lbh)" stroke-width="1.2" transform="translate(-0.50 -0.15)" opacity=".62"/>
<path d="M345.3 296.0 C345.8 299.2 347.4 308.8 348.7 315.0 C350.0 321.2 351.7 327.8 353.1 333.0 C354.6 338.2 354.6 340.2 357.4 346.0 C360.2 351.8 365.9 361.0 370.0 368.0 C374.1 375.0 378.0 381.7 382.0 388.0 C386.0 394.3 390.0 400.0 394.0 406.0 C398.0 412.0 402.2 418.8 406.0 424.0 C409.8 429.2 414.9 435.2 416.7 437.5" stroke="url(#lbd)" stroke-width="3.8"/>
<path d="M345.3 296.0 C345.8 299.2 347.4 308.8 348.7 315.0 C350.0 321.2 351.7 327.8 353.1 333.0 C354.6 338.2 354.6 340.2 357.4 346.0 C360.2 351.8 365.9 361.0 370.0 368.0 C374.1 375.0 378.0 381.7 382.0 388.0 C386.0 394.3 390.0 400.0 394.0 406.0 C398.0 412.0 402.2 418.8 406.0 424.0 C409.8 429.2 414.9 435.2 416.7 437.5" stroke="url(#lb)" stroke-width="2.8"/>
<path d="M345.3 296.0 C345.8 299.2 347.4 308.8 348.7 315.0 C350.0 321.2 351.7 327.8 353.1 333.0 C354.6 338.2 354.6 340.2 357.4 346.0 C360.2 351.8 365.9 361.0 370.0 368.0 C374.1 375.0 378.0 381.7 382.0 388.0 C386.0 394.3 390.0 400.0 394.0 406.0 C398.0 412.0 402.2 418.8 406.0 424.0 C409.8 429.2 414.9 435.2 416.7 437.5" stroke="url(#lbh)" stroke-width="1.2" transform="translate(-0.50 -0.15)" opacity=".62"/>
<path d="M345.0 296.0 C345.5 299.2 347.1 308.8 348.4 315.0 C349.6 321.2 351.2 327.8 352.6 333.0 C354.0 338.2 354.2 340.2 356.8 346.0 C359.4 351.8 364.3 360.8 368.0 368.0 C371.7 375.2 375.2 381.8 379.0 389.0 C382.8 396.2 387.2 404.2 391.0 411.0 C394.8 417.8 398.5 424.5 402.0 430.0 C405.5 435.5 410.2 441.8 411.9 444.1" stroke="url(#lbd)" stroke-width="3.8"/>
<path d="M345.0 296.0 C345.5 299.2 347.1 308.8 348.4 315.0 C349.6 321.2 351.2 327.8 352.6 333.0 C354.0 338.2 354.2 340.2 356.8 346.0 C359.4 351.8 364.3 360.8 368.0 368.0 C371.7 375.2 375.2 381.8 379.0 389.0 C382.8 396.2 387.2 404.2 391.0 411.0 C394.8 417.8 398.5 424.5 402.0 430.0 C405.5 435.5 410.2 441.8 411.9 444.1" stroke="url(#lb)" stroke-width="2.8"/>
<path d="M345.0 296.0 C345.5 299.2 347.1 308.8 348.4 315.0 C349.6 321.2 351.2 327.8 352.6 333.0 C354.0 338.2 354.2 340.2 356.8 346.0 C359.4 351.8 364.3 360.8 368.0 368.0 C371.7 375.2 375.2 381.8 379.0 389.0 C382.8 396.2 387.2 404.2 391.0 411.0 C394.8 417.8 398.5 424.5 402.0 430.0 C405.5 435.5 410.2 441.8 411.9 444.1" stroke="url(#lbh)" stroke-width="1.2" transform="translate(-0.50 -0.15)" opacity=".62"/>
<path d="M344.6 296.0 C345.2 299.2 346.8 308.8 348.0 315.0 C349.3 321.2 350.8 327.8 352.2 333.0 C353.5 338.2 353.9 340.2 356.2 346.0 C358.5 351.8 362.7 360.7 366.0 368.0 C369.3 375.3 372.5 382.8 376.0 390.0 C379.5 397.2 383.7 404.7 387.0 411.0 C390.3 417.3 393.2 423.3 396.0 428.0 C398.8 432.7 402.3 437.5 403.6 439.4" stroke="url(#lbd)" stroke-width="3.8"/>
<path d="M344.6 296.0 C345.2 299.2 346.8 308.8 348.0 315.0 C349.3 321.2 350.8 327.8 352.2 333.0 C353.5 338.2 353.9 340.2 356.2 346.0 C358.5 351.8 362.7 360.7 366.0 368.0 C369.3 375.3 372.5 382.8 376.0 390.0 C379.5 397.2 383.7 404.7 387.0 411.0 C390.3 417.3 393.2 423.3 396.0 428.0 C398.8 432.7 402.3 437.5 403.6 439.4" stroke="url(#lb)" stroke-width="2.8"/>
<path d="M344.6 296.0 C345.2 299.2 346.8 308.8 348.0 315.0 C349.3 321.2 350.8 327.8 352.2 333.0 C353.5 338.2 353.9 340.2 356.2 346.0 C358.5 351.8 362.7 360.7 366.0 368.0 C369.3 375.3 372.5 382.8 376.0 390.0 C379.5 397.2 383.7 404.7 387.0 411.0 C390.3 417.3 393.2 423.3 396.0 428.0 C398.8 432.7 402.3 437.5 403.6 439.4" stroke="url(#lbh)" stroke-width="1.2" transform="translate(-0.50 -0.15)" opacity=".62"/>
<path d="M344.3 296.0 C344.9 299.2 346.5 308.8 347.7 315.0 C348.9 321.2 350.4 327.8 351.7 333.0 C353.0 338.2 353.5 340.0 355.6 346.0 C357.7 352.0 361.6 361.7 364.5 369.0 C367.4 376.3 369.9 383.0 373.0 390.0 C376.1 397.0 380.0 404.7 383.0 411.0 C386.0 417.3 388.6 423.3 391.0 428.0 C393.4 432.7 396.5 437.5 397.6 439.4" stroke="url(#lbd)" stroke-width="3.8"/>
<path d="M344.3 296.0 C344.9 299.2 346.5 308.8 347.7 315.0 C348.9 321.2 350.4 327.8 351.7 333.0 C353.0 338.2 353.5 340.0 355.6 346.0 C357.7 352.0 361.6 361.7 364.5 369.0 C367.4 376.3 369.9 383.0 373.0 390.0 C376.1 397.0 380.0 404.7 383.0 411.0 C386.0 417.3 388.6 423.3 391.0 428.0 C393.4 432.7 396.5 437.5 397.6 439.4" stroke="url(#lb)" stroke-width="2.8"/>
<path d="M344.3 296.0 C344.9 299.2 346.5 308.8 347.7 315.0 C348.9 321.2 350.4 327.8 351.7 333.0 C353.0 338.2 353.5 340.0 355.6 346.0 C357.7 352.0 361.6 361.7 364.5 369.0 C367.4 376.3 369.9 383.0 373.0 390.0 C376.1 397.0 380.0 404.7 383.0 411.0 C386.0 417.3 388.6 423.3 391.0 428.0 C393.4 432.7 396.5 437.5 397.6 439.4" stroke="url(#lbh)" stroke-width="1.2" transform="translate(-0.50 -0.15)" opacity=".62"/>
<path d="M344.0 296.0 C344.6 299.2 346.2 308.8 347.4 315.0 C348.6 321.2 349.9 327.8 351.2 333.0 C352.5 338.2 353.1 340.0 355.0 346.0 C356.9 352.0 360.0 361.7 362.5 369.0 C365.0 376.3 367.2 383.0 370.0 390.0 C372.8 397.0 376.3 404.8 379.0 411.0 C381.7 417.2 383.9 422.4 386.0 427.0 C388.1 431.6 390.7 436.7 391.6 438.6" stroke="url(#lbd)" stroke-width="3.8"/>
<path d="M344.0 296.0 C344.6 299.2 346.2 308.8 347.4 315.0 C348.6 321.2 349.9 327.8 351.2 333.0 C352.5 338.2 353.1 340.0 355.0 346.0 C356.9 352.0 360.0 361.7 362.5 369.0 C365.0 376.3 367.2 383.0 370.0 390.0 C372.8 397.0 376.3 404.8 379.0 411.0 C381.7 417.2 383.9 422.4 386.0 427.0 C388.1 431.6 390.7 436.7 391.6 438.6" stroke="url(#lb)" stroke-width="2.8"/>
<path d="M344.0 296.0 C344.6 299.2 346.2 308.8 347.4 315.0 C348.6 321.2 349.9 327.8 351.2 333.0 C352.5 338.2 353.1 340.0 355.0 346.0 C356.9 352.0 360.0 361.7 362.5 369.0 C365.0 376.3 367.2 383.0 370.0 390.0 C372.8 397.0 376.3 404.8 379.0 411.0 C381.7 417.2 383.9 422.4 386.0 427.0 C388.1 431.6 390.7 436.7 391.6 438.6" stroke="url(#lbh)" stroke-width="1.2" transform="translate(-0.50 -0.15)" opacity=".62"/>
<path d="M337.0 165.8 C337.4 168.7 338.7 177.2 339.5 182.9 C340.2 188.6 341.1 190.5 341.5 200.0 C341.9 209.5 341.5 228.3 341.6 240.0 C341.7 251.7 341.8 261.7 342.0 270.0 C342.2 278.3 342.2 283.0 343.0 290.0 C343.8 297.0 345.5 306.0 346.6 312.0 C347.7 318.0 349.1 323.7 349.6 326.0" stroke="url(#lbd)" stroke-width="3.6"/>
<path d="M337.0 165.8 C337.4 168.7 338.7 177.2 339.5 182.9 C340.2 188.6 341.1 190.5 341.5 200.0 C341.9 209.5 341.5 228.3 341.6 240.0 C341.7 251.7 341.8 261.7 342.0 270.0 C342.2 278.3 342.2 283.0 343.0 290.0 C343.8 297.0 345.5 306.0 346.6 312.0 C347.7 318.0 349.1 323.7 349.6 326.0" stroke="url(#lb)" stroke-width="2.6"/>
<path d="M337.0 165.8 C337.4 168.7 338.7 177.2 339.5 182.9 C340.2 188.6 341.1 190.5 341.5 200.0 C341.9 209.5 341.5 228.3 341.6 240.0 C341.7 251.7 341.8 261.7 342.0 270.0 C342.2 278.3 342.2 283.0 343.0 290.0 C343.8 297.0 345.5 306.0 346.6 312.0 C347.7 318.0 349.1 323.7 349.6 326.0" stroke="url(#lbh)" stroke-width="1.2" transform="translate(-0.50 -0.15)" opacity=".62"/>
<path d="M340.7 169.0 C340.9 171.6 341.7 179.3 342.2 184.5 C342.6 189.7 343.3 190.8 343.4 200.0 C343.6 209.2 343.1 228.3 343.1 240.0 C343.1 251.7 343.1 261.7 343.2 270.0 C343.3 278.3 343.0 283.0 343.7 290.0 C344.4 297.0 346.1 306.0 347.2 312.0 C348.3 318.0 349.7 323.7 350.2 326.0" stroke="url(#lbd)" stroke-width="3.6"/>
<path d="M340.7 169.0 C340.9 171.6 341.7 179.3 342.2 184.5 C342.6 189.7 343.3 190.8 343.4 200.0 C343.6 209.2 343.1 228.3 343.1 240.0 C343.1 251.7 343.1 261.7 343.2 270.0 C343.3 278.3 343.0 283.0 343.7 290.0 C344.4 297.0 346.1 306.0 347.2 312.0 C348.3 318.0 349.7 323.7 350.2 326.0" stroke="url(#lb)" stroke-width="2.6"/>
<path d="M340.7 169.0 C340.9 171.6 341.7 179.3 342.2 184.5 C342.6 189.7 343.3 190.8 343.4 200.0 C343.6 209.2 343.1 228.3 343.1 240.0 C343.1 251.7 343.1 261.7 343.2 270.0 C343.3 278.3 343.0 283.0 343.7 290.0 C344.4 297.0 346.1 306.0 347.2 312.0 C348.3 318.0 349.7 323.7 350.2 326.0" stroke="url(#lbh)" stroke-width="1.2" transform="translate(-0.50 -0.15)" opacity=".62"/>
<path d="M342.6 163.0 C342.9 166.1 343.6 175.3 344.1 181.5 C344.6 187.7 345.3 190.2 345.3 200.0 C345.4 209.8 344.8 228.3 344.6 240.0 C344.5 251.7 344.5 261.7 344.4 270.0 C344.4 278.3 343.8 283.0 344.4 290.0 C344.9 297.0 346.7 306.0 347.7 312.0 C348.8 318.0 350.3 323.7 350.9 326.0" stroke="url(#lbd)" stroke-width="3.6"/>
<path d="M342.6 163.0 C342.9 166.1 343.6 175.3 344.1 181.5 C344.6 187.7 345.3 190.2 345.3 200.0 C345.4 209.8 344.8 228.3 344.6 240.0 C344.5 251.7 344.5 261.7 344.4 270.0 C344.4 278.3 343.8 283.0 344.4 290.0 C344.9 297.0 346.7 306.0 347.7 312.0 C348.8 318.0 350.3 323.7 350.9 326.0" stroke="url(#lb)" stroke-width="2.6"/>
<path d="M342.6 163.0 C342.9 166.1 343.6 175.3 344.1 181.5 C344.6 187.7 345.3 190.2 345.3 200.0 C345.4 209.8 344.8 228.3 344.6 240.0 C344.5 251.7 344.5 261.7 344.4 270.0 C344.4 278.3 343.8 283.0 344.4 290.0 C344.9 297.0 346.7 306.0 347.7 312.0 C348.8 318.0 350.3 323.7 350.9 326.0" stroke="url(#lbh)" stroke-width="1.2" transform="translate(-0.50 -0.15)" opacity=".62"/>
<path d="M345.8 161.5 C345.9 164.7 346.4 174.3 346.6 180.8 C346.8 187.2 347.3 190.1 347.2 200.0 C347.2 209.9 346.4 228.3 346.1 240.0 C345.8 251.7 345.8 261.7 345.6 270.0 C345.5 278.3 344.7 283.0 345.1 290.0 C345.5 297.0 347.2 306.0 348.3 312.0 C349.4 318.0 351.0 323.7 351.5 326.0" stroke="url(#lbd)" stroke-width="3.6"/>
<path d="M345.8 161.5 C345.9 164.7 346.4 174.3 346.6 180.8 C346.8 187.2 347.3 190.1 347.2 200.0 C347.2 209.9 346.4 228.3 346.1 240.0 C345.8 251.7 345.8 261.7 345.6 270.0 C345.5 278.3 344.7 283.0 345.1 290.0 C345.5 297.0 347.2 306.0 348.3 312.0 C349.4 318.0 351.0 323.7 351.5 326.0" stroke="url(#lb)" stroke-width="2.6"/>
<path d="M345.8 161.5 C345.9 164.7 346.4 174.3 346.6 180.8 C346.8 187.2 347.3 190.1 347.2 200.0 C347.2 209.9 346.4 228.3 346.1 240.0 C345.8 251.7 345.8 261.7 345.6 270.0 C345.5 278.3 344.7 283.0 345.1 290.0 C345.5 297.0 347.2 306.0 348.3 312.0 C349.4 318.0 351.0 323.7 351.5 326.0" stroke="url(#lbh)" stroke-width="1.2" transform="translate(-0.50 -0.15)" opacity=".62"/>
<path d="M349.8 163.0 C349.7 166.1 349.6 175.3 349.5 181.5 C349.3 187.7 349.5 190.2 349.2 200.0 C348.9 209.8 348.0 228.3 347.6 240.0 C347.2 251.7 347.2 261.7 346.9 270.0 C346.6 278.3 345.5 283.0 345.8 290.0 C346.1 297.0 347.8 306.0 348.9 312.0 C349.9 318.0 351.6 323.7 352.1 326.0" stroke="url(#lbd)" stroke-width="3.6"/>
<path d="M349.8 163.0 C349.7 166.1 349.6 175.3 349.5 181.5 C349.3 187.7 349.5 190.2 349.2 200.0 C348.9 209.8 348.0 228.3 347.6 240.0 C347.2 251.7 347.2 261.7 346.9 270.0 C346.6 278.3 345.5 283.0 345.8 290.0 C346.1 297.0 347.8 306.0 348.9 312.0 C349.9 318.0 351.6 323.7 352.1 326.0" stroke="url(#lb)" stroke-width="2.6"/>
<path d="M349.8 163.0 C349.7 166.1 349.6 175.3 349.5 181.5 C349.3 187.7 349.5 190.2 349.2 200.0 C348.9 209.8 348.0 228.3 347.6 240.0 C347.2 251.7 347.2 261.7 346.9 270.0 C346.6 278.3 345.5 283.0 345.8 290.0 C346.1 297.0 347.8 306.0 348.9 312.0 C349.9 318.0 351.6 323.7 352.1 326.0" stroke="url(#lbh)" stroke-width="1.2" transform="translate(-0.50 -0.15)" opacity=".62"/>
<path d="M354.5 155.0 C354.2 158.8 353.2 170.0 352.6 177.5 C352.1 185.0 351.7 189.6 351.1 200.0 C350.5 210.4 349.6 228.3 349.1 240.0 C348.6 251.7 348.5 261.7 348.1 270.0 C347.6 278.3 346.3 283.0 346.5 290.0 C346.7 297.0 348.4 306.0 349.4 312.0 C350.5 318.0 352.2 323.7 352.8 326.0" stroke="url(#lbd)" stroke-width="3.6"/>
<path d="M354.5 155.0 C354.2 158.8 353.2 170.0 352.6 177.5 C352.1 185.0 351.7 189.6 351.1 200.0 C350.5 210.4 349.6 228.3 349.1 240.0 C348.6 251.7 348.5 261.7 348.1 270.0 C347.6 278.3 346.3 283.0 346.5 290.0 C346.7 297.0 348.4 306.0 349.4 312.0 C350.5 318.0 352.2 323.7 352.8 326.0" stroke="url(#lb)" stroke-width="2.6"/>
<path d="M354.5 155.0 C354.2 158.8 353.2 170.0 352.6 177.5 C352.1 185.0 351.7 189.6 351.1 200.0 C350.5 210.4 349.6 228.3 349.1 240.0 C348.6 251.7 348.5 261.7 348.1 270.0 C347.6 278.3 346.3 283.0 346.5 290.0 C346.7 297.0 348.4 306.0 349.4 312.0 C350.5 318.0 352.2 323.7 352.8 326.0" stroke="url(#lbh)" stroke-width="1.2" transform="translate(-0.50 -0.15)" opacity=".62"/>
<path d="M362.0 146.5 C361.2 151.0 358.6 164.3 357.1 173.2 C355.6 182.2 354.1 188.9 353.0 200.0 C351.9 211.1 351.2 228.3 350.6 240.0 C350.0 251.7 349.9 261.7 349.3 270.0 C348.7 278.3 347.1 283.0 347.2 290.0 C347.3 297.0 349.0 306.0 350.0 312.0 C351.0 318.0 352.8 323.7 353.4 326.0" stroke="url(#lbd)" stroke-width="3.6"/>
<path d="M362.0 146.5 C361.2 151.0 358.6 164.3 357.1 173.2 C355.6 182.2 354.1 188.9 353.0 200.0 C351.9 211.1 351.2 228.3 350.6 240.0 C350.0 251.7 349.9 261.7 349.3 270.0 C348.7 278.3 347.1 283.0 347.2 290.0 C347.3 297.0 349.0 306.0 350.0 312.0 C351.0 318.0 352.8 323.7 353.4 326.0" stroke="url(#lb)" stroke-width="2.6"/>
<path d="M362.0 146.5 C361.2 151.0 358.6 164.3 357.1 173.2 C355.6 182.2 354.1 188.9 353.0 200.0 C351.9 211.1 351.2 228.3 350.6 240.0 C350.0 251.7 349.9 261.7 349.3 270.0 C348.7 278.3 347.1 283.0 347.2 290.0 C347.3 297.0 349.0 306.0 350.0 312.0 C351.0 318.0 352.8 323.7 353.4 326.0" stroke="url(#lbh)" stroke-width="1.2" transform="translate(-0.50 -0.15)" opacity=".62"/>
<path d="M353.3 258.8 C352 266 350.5 272 348.9 277" stroke="#2e8a24" stroke-width="3"/>
<path d="M353 258.8 C351.7 266 350.2 272 348.6 277" stroke="#58b83c" stroke-width="1.2"/>
<path d="M419 152 L451.3 124 L451.3 203 L447.5 208 L442 215 C435 204 424 190 419 152 Z" fill="url(#rb)" stroke="none" filter="url(#b1)"/>
<path d="M418.2 149.0 C418.3 152.6 417.7 163.7 419.1 170.4 C420.5 177.2 423.7 183.7 426.4 189.3 C429.0 194.9 432.5 200.1 435.0 204.2 C437.5 208.4 440.4 212.4 441.5 214.0" stroke="url(#rbd)" stroke-width="3.1"/>
<path d="M418.2 149.0 C418.3 152.6 417.7 163.7 419.1 170.4 C420.5 177.2 423.7 183.7 426.4 189.3 C429.0 194.9 432.5 200.1 435.0 204.2 C437.5 208.4 440.4 212.4 441.5 214.0" stroke="url(#rb)" stroke-width="2.1"/>
<path d="M418.2 149.0 C418.3 152.6 417.7 163.7 419.1 170.4 C420.5 177.2 423.7 183.7 426.4 189.3 C429.0 194.9 432.5 200.1 435.0 204.2 C437.5 208.4 440.4 212.4 441.5 214.0" stroke="#e4c444" stroke-width=".9" opacity=".42" transform="translate(-.5 0)"/>
<path d="M422.4 140.8 C422.5 144.8 422.1 157.2 423.2 164.7 C424.4 172.2 427.1 179.5 429.3 185.7 C431.6 192.0 434.5 197.8 436.7 202.4 C438.8 207.0 441.3 211.5 442.2 213.3" stroke="url(#rbd)" stroke-width="3.1"/>
<path d="M422.4 140.8 C422.5 144.8 422.1 157.2 423.2 164.7 C424.4 172.2 427.1 179.5 429.3 185.7 C431.6 192.0 434.5 197.8 436.7 202.4 C438.8 207.0 441.3 211.5 442.2 213.3" stroke="url(#rb)" stroke-width="2.1"/>
<path d="M422.4 140.8 C422.5 144.8 422.1 157.2 423.2 164.7 C424.4 172.2 427.1 179.5 429.3 185.7 C431.6 192.0 434.5 197.8 436.7 202.4 C438.8 207.0 441.3 211.5 442.2 213.3" stroke="#e4c444" stroke-width=".9" opacity=".42" transform="translate(-.5 0)"/>
<path d="M425.8 138.5 C425.9 142.6 425.5 155.3 426.5 162.9 C427.5 170.6 429.9 178.0 431.8 184.4 C433.8 190.8 436.3 196.7 438.2 201.4 C440.0 206.1 442.2 210.7 443.0 212.5" stroke="url(#rbd)" stroke-width="3.1"/>
<path d="M425.8 138.5 C425.9 142.6 425.5 155.3 426.5 162.9 C427.5 170.6 429.9 178.0 431.8 184.4 C433.8 190.8 436.3 196.7 438.2 201.4 C440.0 206.1 442.2 210.7 443.0 212.5" stroke="url(#rb)" stroke-width="2.1"/>
<path d="M425.8 138.5 C425.9 142.6 425.5 155.3 426.5 162.9 C427.5 170.6 429.9 178.0 431.8 184.4 C433.8 190.8 436.3 196.7 438.2 201.4 C440.0 206.1 442.2 210.7 443.0 212.5" stroke="#e4c444" stroke-width=".9" opacity=".42" transform="translate(-.5 0)"/>
<path d="M428.9 138.5 C429.0 142.5 428.7 155.1 429.6 162.7 C430.4 170.3 432.4 177.6 434.1 184.0 C435.8 190.3 438.0 196.2 439.6 200.8 C441.2 205.5 443.0 210.0 443.7 211.8" stroke="url(#rbd)" stroke-width="3.1"/>
<path d="M428.9 138.5 C429.0 142.5 428.7 155.1 429.6 162.7 C430.4 170.3 432.4 177.6 434.1 184.0 C435.8 190.3 438.0 196.2 439.6 200.8 C441.2 205.5 443.0 210.0 443.7 211.8" stroke="url(#rb)" stroke-width="2.1"/>
<path d="M428.9 138.5 C429.0 142.5 428.7 155.1 429.6 162.7 C430.4 170.3 432.4 177.6 434.1 184.0 C435.8 190.3 438.0 196.2 439.6 200.8 C441.2 205.5 443.0 210.0 443.7 211.8" stroke="#e4c444" stroke-width=".9" opacity=".42" transform="translate(-.5 0)"/>
<path d="M431.7 135.5 C431.8 139.7 431.5 152.6 432.3 160.4 C433.0 168.3 434.7 175.8 436.2 182.4 C437.6 188.9 439.5 195.0 440.9 199.8 C442.3 204.5 443.9 209.2 444.5 211.1" stroke="url(#rbd)" stroke-width="3.1"/>
<path d="M431.7 135.5 C431.8 139.7 431.5 152.6 432.3 160.4 C433.0 168.3 434.7 175.8 436.2 182.4 C437.6 188.9 439.5 195.0 440.9 199.8 C442.3 204.5 443.9 209.2 444.5 211.1" stroke="url(#rb)" stroke-width="2.1"/>
<path d="M431.7 135.5 C431.8 139.7 431.5 152.6 432.3 160.4 C433.0 168.3 434.7 175.8 436.2 182.4 C437.6 188.9 439.5 195.0 440.9 199.8 C442.3 204.5 443.9 209.2 444.5 211.1" stroke="#e4c444" stroke-width=".9" opacity=".42" transform="translate(-.5 0)"/>
<path d="M434.5 130.0 C434.6 134.4 434.4 148.2 435.0 156.5 C435.6 164.8 437.0 172.9 438.3 179.8 C439.5 186.8 441.1 193.2 442.2 198.3 C443.4 203.4 444.7 208.4 445.2 210.4" stroke="url(#rbd)" stroke-width="3.1"/>
<path d="M434.5 130.0 C434.6 134.4 434.4 148.2 435.0 156.5 C435.6 164.8 437.0 172.9 438.3 179.8 C439.5 186.8 441.1 193.2 442.2 198.3 C443.4 203.4 444.7 208.4 445.2 210.4" stroke="url(#rb)" stroke-width="2.1"/>
<path d="M434.5 130.0 C434.6 134.4 434.4 148.2 435.0 156.5 C435.6 164.8 437.0 172.9 438.3 179.8 C439.5 186.8 441.1 193.2 442.2 198.3 C443.4 203.4 444.7 208.4 445.2 210.4" stroke="#e4c444" stroke-width=".9" opacity=".42" transform="translate(-.5 0)"/>
<path d="M437.0 127.5 C437.1 132.0 436.9 146.1 437.4 154.6 C437.9 163.1 439.1 171.3 440.1 178.4 C441.1 185.5 442.5 192.1 443.5 197.3 C444.4 202.5 445.6 207.6 446.0 209.6" stroke="url(#rbd)" stroke-width="3.1"/>
<path d="M437.0 127.5 C437.1 132.0 436.9 146.1 437.4 154.6 C437.9 163.1 439.1 171.3 440.1 178.4 C441.1 185.5 442.5 192.1 443.5 197.3 C444.4 202.5 445.6 207.6 446.0 209.6" stroke="url(#rb)" stroke-width="2.1"/>
<path d="M437.0 127.5 C437.1 132.0 436.9 146.1 437.4 154.6 C437.9 163.1 439.1 171.3 440.1 178.4 C441.1 185.5 442.5 192.1 443.5 197.3 C444.4 202.5 445.6 207.6 446.0 209.6" stroke="#e4c444" stroke-width=".9" opacity=".42" transform="translate(-.5 0)"/>
<path d="M439.2 135.5 C439.3 139.5 439.1 152.1 439.5 159.7 C440.0 167.3 441.0 174.7 441.8 181.0 C442.7 187.4 443.8 193.2 444.6 197.9 C445.4 202.5 446.4 207.1 446.7 208.9" stroke="url(#rbd)" stroke-width="3.1"/>
<path d="M439.2 135.5 C439.3 139.5 439.1 152.1 439.5 159.7 C440.0 167.3 441.0 174.7 441.8 181.0 C442.7 187.4 443.8 193.2 444.6 197.9 C445.4 202.5 446.4 207.1 446.7 208.9" stroke="url(#rb)" stroke-width="2.1"/>
<path d="M439.2 135.5 C439.3 139.5 439.1 152.1 439.5 159.7 C440.0 167.3 441.0 174.7 441.8 181.0 C442.7 187.4 443.8 193.2 444.6 197.9 C445.4 202.5 446.4 207.1 446.7 208.9" stroke="#e4c444" stroke-width=".9" opacity=".42" transform="translate(-.5 0)"/>
<path d="M442.0 125.5 C442.0 130.0 441.9 144.2 442.2 152.8 C442.6 161.3 443.3 169.6 443.9 176.8 C444.5 183.9 445.3 190.5 445.9 195.8 C446.5 201.0 447.2 206.1 447.5 208.2" stroke="url(#rbd)" stroke-width="3.1"/>
<path d="M442.0 125.5 C442.0 130.0 441.9 144.2 442.2 152.8 C442.6 161.3 443.3 169.6 443.9 176.8 C444.5 183.9 445.3 190.5 445.9 195.8 C446.5 201.0 447.2 206.1 447.5 208.2" stroke="url(#rb)" stroke-width="2.1"/>
<path d="M442.0 125.5 C442.0 130.0 441.9 144.2 442.2 152.8 C442.6 161.3 443.3 169.6 443.9 176.8 C444.5 183.9 445.3 190.5 445.9 195.8 C446.5 201.0 447.2 206.1 447.5 208.2" stroke="#e4c444" stroke-width=".9" opacity=".42" transform="translate(-.5 0)"/>
<path d="M445.2 123.0 C445.2 127.6 445.2 142.1 445.4 150.9 C445.5 159.6 445.9 168.0 446.3 175.4 C446.6 182.7 447.0 189.4 447.4 194.8 C447.7 200.1 448.1 205.3 448.2 207.5" stroke="url(#rbd)" stroke-width="3.1"/>
<path d="M445.2 123.0 C445.2 127.6 445.2 142.1 445.4 150.9 C445.5 159.6 445.9 168.0 446.3 175.4 C446.6 182.7 447.0 189.4 447.4 194.8 C447.7 200.1 448.1 205.3 448.2 207.5" stroke="url(#rb)" stroke-width="2.1"/>
<path d="M445.2 123.0 C445.2 127.6 445.2 142.1 445.4 150.9 C445.5 159.6 445.9 168.0 446.3 175.4 C446.6 182.7 447.0 189.4 447.4 194.8 C447.7 200.1 448.1 205.3 448.2 207.5" stroke="#e4c444" stroke-width=".9" opacity=".42" transform="translate(-.5 0)"/>
<path d="M447.7 123.0 C447.7 127.6 447.7 142.0 447.8 150.6 C447.9 159.3 448.0 167.7 448.1 174.9 C448.3 182.2 448.5 188.9 448.6 194.2 C448.7 199.5 448.9 204.6 449.0 206.7" stroke="url(#rbd)" stroke-width="3.1"/>
<path d="M447.7 123.0 C447.7 127.6 447.7 142.0 447.8 150.6 C447.9 159.3 448.0 167.7 448.1 174.9 C448.3 182.2 448.5 188.9 448.6 194.2 C448.7 199.5 448.9 204.6 449.0 206.7" stroke="url(#rb)" stroke-width="2.1"/>
<path d="M447.7 123.0 C447.7 127.6 447.7 142.0 447.8 150.6 C447.9 159.3 448.0 167.7 448.1 174.9 C448.3 182.2 448.5 188.9 448.6 194.2 C448.7 199.5 448.9 204.6 449.0 206.7" stroke="#e4c444" stroke-width=".9" opacity=".42" transform="translate(-.5 0)"/>
<path d="M450.3 121.5 C450.3 126.1 450.3 140.7 450.3 149.4 C450.3 158.1 450.2 166.6 450.1 173.9 C450.0 181.2 449.9 188.0 449.9 193.3 C449.8 198.7 449.7 203.9 449.7 206.0" stroke="url(#rbd)" stroke-width="3.1"/>
<path d="M450.3 121.5 C450.3 126.1 450.3 140.7 450.3 149.4 C450.3 158.1 450.2 166.6 450.1 173.9 C450.0 181.2 449.9 188.0 449.9 193.3 C449.8 198.7 449.7 203.9 449.7 206.0" stroke="url(#rb)" stroke-width="2.1"/>
<path d="M450.3 121.5 C450.3 126.1 450.3 140.7 450.3 149.4 C450.3 158.1 450.2 166.6 450.1 173.9 C450.0 181.2 449.9 188.0 449.9 193.3 C449.8 198.7 449.7 203.9 449.7 206.0" stroke="#e4c444" stroke-width=".9" opacity=".42" transform="translate(-.5 0)"/>
<path d="M408.0 196.0 C406.3 196.7 401.0 197.3 398.0 200.0 C395.0 202.7 391.7 206.7 390.0 212.0 C388.3 217.3 388.0 225.7 388.0 232.0 C388.0 238.3 389.0 245.7 390.0 250.0 C391.0 254.3 393.3 256.7 394.0 258.0" stroke="url(#fgd)" stroke-width="3.5"/>
<path d="M408.0 196.0 C406.3 196.7 401.0 197.3 398.0 200.0 C395.0 202.7 391.7 206.7 390.0 212.0 C388.3 217.3 388.0 225.7 388.0 232.0 C388.0 238.3 389.0 245.7 390.0 250.0 C391.0 254.3 393.3 256.7 394.0 258.0" stroke="url(#fg)" stroke-width="2.5"/>
<path d="M408.0 196.0 C406.3 196.7 401.0 197.3 398.0 200.0 C395.0 202.7 391.7 206.7 390.0 212.0 C388.3 217.3 388.0 225.7 388.0 232.0 C388.0 238.3 389.0 245.7 390.0 250.0 C391.0 254.3 393.3 256.7 394.0 258.0" stroke="url(#fgh)" stroke-width="1.2" transform="translate(-0.50 -0.15)" opacity=".62"/>
<path d="M409.0 198.0 C407.8 199.0 404.0 201.0 402.0 204.0 C400.0 207.0 398.0 210.7 397.0 216.0 C396.0 221.3 395.7 229.7 396.0 236.0 C396.3 242.3 398.5 251.0 399.0 254.0" stroke="url(#fgd)" stroke-width="3.5"/>
<path d="M409.0 198.0 C407.8 199.0 404.0 201.0 402.0 204.0 C400.0 207.0 398.0 210.7 397.0 216.0 C396.0 221.3 395.7 229.7 396.0 236.0 C396.3 242.3 398.5 251.0 399.0 254.0" stroke="url(#fg)" stroke-width="2.5"/>
<path d="M409.0 198.0 C407.8 199.0 404.0 201.0 402.0 204.0 C400.0 207.0 398.0 210.7 397.0 216.0 C396.0 221.3 395.7 229.7 396.0 236.0 C396.3 242.3 398.5 251.0 399.0 254.0" stroke="url(#fgh)" stroke-width="1.2" transform="translate(-0.50 -0.15)" opacity=".62"/>
<path d="M407.0 193.0 C404.8 193.5 397.8 193.2 394.0 196.0 C390.2 198.8 386.2 204.0 384.0 210.0 C381.8 216.0 381.2 225.3 381.0 232.0 C380.8 238.7 381.8 245.3 383.0 250.0 C384.2 254.7 387.2 258.3 388.0 260.0" stroke="url(#fgd)" stroke-width="3.5"/>
<path d="M407.0 193.0 C404.8 193.5 397.8 193.2 394.0 196.0 C390.2 198.8 386.2 204.0 384.0 210.0 C381.8 216.0 381.2 225.3 381.0 232.0 C380.8 238.7 381.8 245.3 383.0 250.0 C384.2 254.7 387.2 258.3 388.0 260.0" stroke="url(#fg)" stroke-width="2.5"/>
<path d="M407.0 193.0 C404.8 193.5 397.8 193.2 394.0 196.0 C390.2 198.8 386.2 204.0 384.0 210.0 C381.8 216.0 381.2 225.3 381.0 232.0 C380.8 238.7 381.8 245.3 383.0 250.0 C384.2 254.7 387.2 258.3 388.0 260.0" stroke="url(#fgh)" stroke-width="1.2" transform="translate(-0.50 -0.15)" opacity=".62"/>
<path d="M416.0 196.0 C417.3 197.0 421.8 198.7 424.0 202.0 C426.2 205.3 428.0 210.3 429.0 216.0 C430.0 221.7 430.2 230.0 430.0 236.0 C429.8 242.0 428.3 249.3 428.0 252.0" stroke="url(#fgd)" stroke-width="3.5"/>
<path d="M416.0 196.0 C417.3 197.0 421.8 198.7 424.0 202.0 C426.2 205.3 428.0 210.3 429.0 216.0 C430.0 221.7 430.2 230.0 430.0 236.0 C429.8 242.0 428.3 249.3 428.0 252.0" stroke="url(#fg)" stroke-width="2.5"/>
<path d="M416.0 196.0 C417.3 197.0 421.8 198.7 424.0 202.0 C426.2 205.3 428.0 210.3 429.0 216.0 C430.0 221.7 430.2 230.0 430.0 236.0 C429.8 242.0 428.3 249.3 428.0 252.0" stroke="url(#fgh)" stroke-width="1.2" transform="translate(-0.50 -0.15)" opacity=".62"/>
<path d="M417.0 192.0 C418.8 193.0 425.0 194.7 428.0 198.0 C431.0 201.3 433.5 206.3 435.0 212.0 C436.5 217.7 437.2 225.7 437.0 232.0 C436.8 238.3 435.2 245.7 434.0 250.0 C432.8 254.3 430.7 256.7 430.0 258.0" stroke="url(#fgd)" stroke-width="3.5"/>
<path d="M417.0 192.0 C418.8 193.0 425.0 194.7 428.0 198.0 C431.0 201.3 433.5 206.3 435.0 212.0 C436.5 217.7 437.2 225.7 437.0 232.0 C436.8 238.3 435.2 245.7 434.0 250.0 C432.8 254.3 430.7 256.7 430.0 258.0" stroke="url(#fg)" stroke-width="2.5"/>
<path d="M417.0 192.0 C418.8 193.0 425.0 194.7 428.0 198.0 C431.0 201.3 433.5 206.3 435.0 212.0 C436.5 217.7 437.2 225.7 437.0 232.0 C436.8 238.3 435.2 245.7 434.0 250.0 C432.8 254.3 430.7 256.7 430.0 258.0" stroke="url(#fgh)" stroke-width="1.2" transform="translate(-0.50 -0.15)" opacity=".62"/>
<path d="M418.0 200.0 C418.8 201.7 422.0 205.7 423.0 210.0 C424.0 214.3 424.2 220.0 424.0 226.0 C423.8 232.0 422.8 240.7 422.0 246.0 C421.2 251.3 419.5 256.0 419.0 258.0" stroke="url(#fgd)" stroke-width="3.5"/>
<path d="M418.0 200.0 C418.8 201.7 422.0 205.7 423.0 210.0 C424.0 214.3 424.2 220.0 424.0 226.0 C423.8 232.0 422.8 240.7 422.0 246.0 C421.2 251.3 419.5 256.0 419.0 258.0" stroke="url(#fg)" stroke-width="2.5"/>
<path d="M418.0 200.0 C418.8 201.7 422.0 205.7 423.0 210.0 C424.0 214.3 424.2 220.0 424.0 226.0 C423.8 232.0 422.8 240.7 422.0 246.0 C421.2 251.3 419.5 256.0 419.0 258.0" stroke="url(#fgh)" stroke-width="1.2" transform="translate(-0.50 -0.15)" opacity=".62"/>
<path d="M404.0 205.0 C403.3 206.5 400.5 209.8 400.0 214.0 C399.5 218.2 400.3 224.7 401.0 230.0 C401.7 235.3 403.2 241.7 404.0 246.0 C404.8 250.3 405.7 254.3 406.0 256.0" stroke="url(#fgd)" stroke-width="3.5"/>
<path d="M404.0 205.0 C403.3 206.5 400.5 209.8 400.0 214.0 C399.5 218.2 400.3 224.7 401.0 230.0 C401.7 235.3 403.2 241.7 404.0 246.0 C404.8 250.3 405.7 254.3 406.0 256.0" stroke="url(#fg)" stroke-width="2.5"/>
<path d="M404.0 205.0 C403.3 206.5 400.5 209.8 400.0 214.0 C399.5 218.2 400.3 224.7 401.0 230.0 C401.7 235.3 403.2 241.7 404.0 246.0 C404.8 250.3 405.7 254.3 406.0 256.0" stroke="url(#fgh)" stroke-width="1.2" transform="translate(-0.50 -0.15)" opacity=".62"/>
<path d="M405.0 200.0 C403.3 201.0 397.3 202.7 395.0 206.0 C392.7 209.3 391.5 214.3 391.0 220.0 C390.5 225.7 391.2 234.7 392.0 240.0 C392.8 245.3 394.3 249.0 396.0 252.0 C397.7 255.0 401.0 257.0 402.0 258.0" stroke="url(#fgd)" stroke-width="3.5"/>
<path d="M405.0 200.0 C403.3 201.0 397.3 202.7 395.0 206.0 C392.7 209.3 391.5 214.3 391.0 220.0 C390.5 225.7 391.2 234.7 392.0 240.0 C392.8 245.3 394.3 249.0 396.0 252.0 C397.7 255.0 401.0 257.0 402.0 258.0" stroke="url(#fg)" stroke-width="2.5"/>
<path d="M405.0 200.0 C403.3 201.0 397.3 202.7 395.0 206.0 C392.7 209.3 391.5 214.3 391.0 220.0 C390.5 225.7 391.2 234.7 392.0 240.0 C392.8 245.3 394.3 249.0 396.0 252.0 C397.7 255.0 401.0 257.0 402.0 258.0" stroke="url(#fgh)" stroke-width="1.2" transform="translate(-0.50 -0.15)" opacity=".62"/>
<path d="M414.0 236.0 C414.3 238.0 415.0 244.3 416.0 248.0 C417.0 251.7 418.3 255.3 420.0 258.0 C421.7 260.7 425.0 263.0 426.0 264.0" stroke="url(#fgd)" stroke-width="3.5"/>
<path d="M414.0 236.0 C414.3 238.0 415.0 244.3 416.0 248.0 C417.0 251.7 418.3 255.3 420.0 258.0 C421.7 260.7 425.0 263.0 426.0 264.0" stroke="url(#fg)" stroke-width="2.5"/>
<path d="M414.0 236.0 C414.3 238.0 415.0 244.3 416.0 248.0 C417.0 251.7 418.3 255.3 420.0 258.0 C421.7 260.7 425.0 263.0 426.0 264.0" stroke="url(#fgh)" stroke-width="1.2" transform="translate(-0.50 -0.15)" opacity=".62"/>
<path d="M410.0 238.0 C410.2 240.0 410.3 246.3 411.0 250.0 C411.7 253.7 412.7 257.3 414.0 260.0 C415.3 262.7 418.2 265.0 419.0 266.0" stroke="url(#fgd)" stroke-width="3.5"/>
<path d="M410.0 238.0 C410.2 240.0 410.3 246.3 411.0 250.0 C411.7 253.7 412.7 257.3 414.0 260.0 C415.3 262.7 418.2 265.0 419.0 266.0" stroke="url(#fg)" stroke-width="2.5"/>
<path d="M410.0 238.0 C410.2 240.0 410.3 246.3 411.0 250.0 C411.7 253.7 412.7 257.3 414.0 260.0 C415.3 262.7 418.2 265.0 419.0 266.0" stroke="url(#fgh)" stroke-width="1.2" transform="translate(-0.50 -0.15)" opacity=".62"/>
<path d="M413.0 181.8 C413.0 184.8 413.1 192.8 413.0 200.0 C412.9 207.2 412.7 216.7 412.6 225.0 C412.5 233.3 412.4 243.8 412.4 250.0 C412.4 256.2 412.4 260.0 412.4 262.0" stroke="url(#fgd)" stroke-width="4.2"/>
<path d="M413.0 181.8 C413.0 184.8 413.1 192.8 413.0 200.0 C412.9 207.2 412.7 216.7 412.6 225.0 C412.5 233.3 412.4 243.8 412.4 250.0 C412.4 256.2 412.4 260.0 412.4 262.0" stroke="url(#fg)" stroke-width="3.0"/>
<path d="M413.0 181.8 C413.0 184.8 413.1 192.8 413.0 200.0 C412.9 207.2 412.7 216.7 412.6 225.0 C412.5 233.3 412.4 243.8 412.4 250.0 C412.4 256.2 412.4 260.0 412.4 262.0" stroke="url(#fgh)" stroke-width="1.2" transform="translate(-0.50 -0.15)" opacity=".62"/>
<path d="M413 182 L412.8 212" stroke="#a8b014" stroke-width="3.6"/>
<path d="M412.4 182 L412.2 212" stroke="#d8d838" stroke-width="1.3"/>
<path d="M413.5 183.0 C414.8 182.5 418.5 179.7 421.0 180.0 C423.5 180.3 426.5 182.8 428.5 185.0 C430.5 187.2 432.2 191.7 433.0 193.0" stroke="url(#fyd)" stroke-width="3.5"/>
<path d="M413.5 183.0 C414.8 182.5 418.5 179.7 421.0 180.0 C423.5 180.3 426.5 182.8 428.5 185.0 C430.5 187.2 432.2 191.7 433.0 193.0" stroke="url(#fy)" stroke-width="2.5"/>
<path d="M413.5 183.0 C414.8 182.5 418.5 179.7 421.0 180.0 C423.5 180.3 426.5 182.8 428.5 185.0 C430.5 187.2 432.2 191.7 433.0 193.0" stroke="url(#fyh)" stroke-width="1.2" transform="translate(-0.50 -0.15)" opacity=".62"/>
<path d="M424.0 196.0 C425.1 195.4 428.4 192.0 430.6 192.5 C432.8 193.0 435.3 195.8 437.0 199.0 C438.7 202.2 440.0 207.2 441.0 212.0 C442.0 216.8 443.0 222.3 443.0 228.0 C443.0 233.7 442.3 240.3 441.0 246.0 C439.7 251.7 437.2 257.7 435.0 262.0 C432.8 266.3 429.2 270.3 428.0 272.0" stroke="url(#fyd)" stroke-width="3.5"/>
<path d="M424.0 196.0 C425.1 195.4 428.4 192.0 430.6 192.5 C432.8 193.0 435.3 195.8 437.0 199.0 C438.7 202.2 440.0 207.2 441.0 212.0 C442.0 216.8 443.0 222.3 443.0 228.0 C443.0 233.7 442.3 240.3 441.0 246.0 C439.7 251.7 437.2 257.7 435.0 262.0 C432.8 266.3 429.2 270.3 428.0 272.0" stroke="url(#fy)" stroke-width="2.5"/>
<path d="M424.0 196.0 C425.1 195.4 428.4 192.0 430.6 192.5 C432.8 193.0 435.3 195.8 437.0 199.0 C438.7 202.2 440.0 207.2 441.0 212.0 C442.0 216.8 443.0 222.3 443.0 228.0 C443.0 233.7 442.3 240.3 441.0 246.0 C439.7 251.7 437.2 257.7 435.0 262.0 C432.8 266.3 429.2 270.3 428.0 272.0" stroke="url(#fyh)" stroke-width="1.2" transform="translate(-0.50 -0.15)" opacity=".62"/>
<path d="M419.0 214.0 C419.8 213.3 422.3 209.8 424.0 210.0 C425.7 210.2 427.7 212.0 429.0 215.0 C430.3 218.0 431.5 223.2 432.0 228.0 C432.5 232.8 432.7 239.0 432.0 244.0 C431.3 249.0 429.8 254.0 428.0 258.0 C426.2 262.0 422.2 266.3 421.0 268.0" stroke="url(#fyd)" stroke-width="3.5"/>
<path d="M419.0 214.0 C419.8 213.3 422.3 209.8 424.0 210.0 C425.7 210.2 427.7 212.0 429.0 215.0 C430.3 218.0 431.5 223.2 432.0 228.0 C432.5 232.8 432.7 239.0 432.0 244.0 C431.3 249.0 429.8 254.0 428.0 258.0 C426.2 262.0 422.2 266.3 421.0 268.0" stroke="url(#fy)" stroke-width="2.5"/>
<path d="M419.0 214.0 C419.8 213.3 422.3 209.8 424.0 210.0 C425.7 210.2 427.7 212.0 429.0 215.0 C430.3 218.0 431.5 223.2 432.0 228.0 C432.5 232.8 432.7 239.0 432.0 244.0 C431.3 249.0 429.8 254.0 428.0 258.0 C426.2 262.0 422.2 266.3 421.0 268.0" stroke="url(#fyh)" stroke-width="1.2" transform="translate(-0.50 -0.15)" opacity=".62"/>
<path d="M423.0 233.0 C423.9 232.2 426.6 228.2 428.4 228.0 C430.2 227.8 432.6 229.0 434.0 232.0 C435.4 235.0 436.8 241.3 437.0 246.0 C437.2 250.7 436.2 256.0 435.0 260.0 C433.8 264.0 431.8 267.3 430.0 270.0 C428.2 272.7 425.0 275.0 424.0 276.0" stroke="url(#fyd)" stroke-width="3.5"/>
<path d="M423.0 233.0 C423.9 232.2 426.6 228.2 428.4 228.0 C430.2 227.8 432.6 229.0 434.0 232.0 C435.4 235.0 436.8 241.3 437.0 246.0 C437.2 250.7 436.2 256.0 435.0 260.0 C433.8 264.0 431.8 267.3 430.0 270.0 C428.2 272.7 425.0 275.0 424.0 276.0" stroke="url(#fy)" stroke-width="2.5"/>
<path d="M423.0 233.0 C423.9 232.2 426.6 228.2 428.4 228.0 C430.2 227.8 432.6 229.0 434.0 232.0 C435.4 235.0 436.8 241.3 437.0 246.0 C437.2 250.7 436.2 256.0 435.0 260.0 C433.8 264.0 431.8 267.3 430.0 270.0 C428.2 272.7 425.0 275.0 424.0 276.0" stroke="url(#fyh)" stroke-width="1.2" transform="translate(-0.50 -0.15)" opacity=".62"/>
<path d="M431.0 225.0 C432.1 224.2 435.4 220.1 437.4 220.1 C439.4 220.1 441.6 222.0 443.0 225.0 C444.4 228.0 445.7 233.2 446.0 238.0 C446.3 242.8 446.0 249.3 445.0 254.0 C444.0 258.7 442.2 262.3 440.0 266.0 C437.8 269.7 433.3 274.3 432.0 276.0" stroke="url(#fyd)" stroke-width="3.5"/>
<path d="M431.0 225.0 C432.1 224.2 435.4 220.1 437.4 220.1 C439.4 220.1 441.6 222.0 443.0 225.0 C444.4 228.0 445.7 233.2 446.0 238.0 C446.3 242.8 446.0 249.3 445.0 254.0 C444.0 258.7 442.2 262.3 440.0 266.0 C437.8 269.7 433.3 274.3 432.0 276.0" stroke="url(#fy)" stroke-width="2.5"/>
<path d="M431.0 225.0 C432.1 224.2 435.4 220.1 437.4 220.1 C439.4 220.1 441.6 222.0 443.0 225.0 C444.4 228.0 445.7 233.2 446.0 238.0 C446.3 242.8 446.0 249.3 445.0 254.0 C444.0 258.7 442.2 262.3 440.0 266.0 C437.8 269.7 433.3 274.3 432.0 276.0" stroke="url(#fyh)" stroke-width="1.2" transform="translate(-0.50 -0.15)" opacity=".62"/>
<path d="M430.0 212.0 C431.2 211.3 435.1 207.5 437.4 207.7 C439.7 207.9 442.2 209.9 444.0 213.0 C445.8 216.1 447.0 220.8 448.0 226.0 C449.0 231.2 450.0 238.3 450.0 244.0 C450.0 249.7 449.2 255.3 448.0 260.0 C446.8 264.7 444.8 268.7 443.0 272.0 C441.2 275.3 438.0 278.7 437.0 280.0" stroke="url(#fyd)" stroke-width="3.5"/>
<path d="M430.0 212.0 C431.2 211.3 435.1 207.5 437.4 207.7 C439.7 207.9 442.2 209.9 444.0 213.0 C445.8 216.1 447.0 220.8 448.0 226.0 C449.0 231.2 450.0 238.3 450.0 244.0 C450.0 249.7 449.2 255.3 448.0 260.0 C446.8 264.7 444.8 268.7 443.0 272.0 C441.2 275.3 438.0 278.7 437.0 280.0" stroke="url(#fy)" stroke-width="2.5"/>
<path d="M430.0 212.0 C431.2 211.3 435.1 207.5 437.4 207.7 C439.7 207.9 442.2 209.9 444.0 213.0 C445.8 216.1 447.0 220.8 448.0 226.0 C449.0 231.2 450.0 238.3 450.0 244.0 C450.0 249.7 449.2 255.3 448.0 260.0 C446.8 264.7 444.8 268.7 443.0 272.0 C441.2 275.3 438.0 278.7 437.0 280.0" stroke="url(#fyh)" stroke-width="1.2" transform="translate(-0.50 -0.15)" opacity=".62"/>
<path d="M436.0 240.0 C436.8 239.3 439.3 235.8 441.0 236.0 C442.7 236.2 444.7 238.0 446.0 241.0 C447.3 244.0 448.7 249.8 449.0 254.0 C449.3 258.2 449.0 262.3 448.0 266.0 C447.0 269.7 443.8 274.3 443.0 276.0" stroke="url(#fyd)" stroke-width="3.5"/>
<path d="M436.0 240.0 C436.8 239.3 439.3 235.8 441.0 236.0 C442.7 236.2 444.7 238.0 446.0 241.0 C447.3 244.0 448.7 249.8 449.0 254.0 C449.3 258.2 449.0 262.3 448.0 266.0 C447.0 269.7 443.8 274.3 443.0 276.0" stroke="url(#fy)" stroke-width="2.5"/>
<path d="M436.0 240.0 C436.8 239.3 439.3 235.8 441.0 236.0 C442.7 236.2 444.7 238.0 446.0 241.0 C447.3 244.0 448.7 249.8 449.0 254.0 C449.3 258.2 449.0 262.3 448.0 266.0 C447.0 269.7 443.8 274.3 443.0 276.0" stroke="url(#fyh)" stroke-width="1.2" transform="translate(-0.50 -0.15)" opacity=".62"/>
<path d="M444.0 228.0 C444.8 227.3 447.3 223.7 449.0 224.0 C450.7 224.3 452.8 226.7 454.0 230.0 C455.2 233.3 456.0 239.3 456.0 244.0 C456.0 248.7 455.0 254.0 454.0 258.0 C453.0 262.0 451.7 265.0 450.0 268.0 C448.3 271.0 445.0 274.7 444.0 276.0" stroke="url(#fyd)" stroke-width="3.5"/>
<path d="M444.0 228.0 C444.8 227.3 447.3 223.7 449.0 224.0 C450.7 224.3 452.8 226.7 454.0 230.0 C455.2 233.3 456.0 239.3 456.0 244.0 C456.0 248.7 455.0 254.0 454.0 258.0 C453.0 262.0 451.7 265.0 450.0 268.0 C448.3 271.0 445.0 274.7 444.0 276.0" stroke="url(#fy)" stroke-width="2.5"/>
<path d="M444.0 228.0 C444.8 227.3 447.3 223.7 449.0 224.0 C450.7 224.3 452.8 226.7 454.0 230.0 C455.2 233.3 456.0 239.3 456.0 244.0 C456.0 248.7 455.0 254.0 454.0 258.0 C453.0 262.0 451.7 265.0 450.0 268.0 C448.3 271.0 445.0 274.7 444.0 276.0" stroke="url(#fyh)" stroke-width="1.2" transform="translate(-0.50 -0.15)" opacity=".62"/>
<path d="M440.0 214.0 C441.1 213.3 444.2 209.5 446.4 210.0 C448.6 210.5 451.1 213.6 453.0 217.0 C454.9 220.4 456.9 225.5 457.7 230.3 C458.4 235.1 457.9 241.1 457.5 246.0 C457.1 250.9 456.1 256.0 455.0 260.0 C453.9 264.0 451.7 268.3 451.0 270.0" stroke="url(#fyd)" stroke-width="3.5"/>
<path d="M440.0 214.0 C441.1 213.3 444.2 209.5 446.4 210.0 C448.6 210.5 451.1 213.6 453.0 217.0 C454.9 220.4 456.9 225.5 457.7 230.3 C458.4 235.1 457.9 241.1 457.5 246.0 C457.1 250.9 456.1 256.0 455.0 260.0 C453.9 264.0 451.7 268.3 451.0 270.0" stroke="url(#fy)" stroke-width="2.5"/>
<path d="M440.0 214.0 C441.1 213.3 444.2 209.5 446.4 210.0 C448.6 210.5 451.1 213.6 453.0 217.0 C454.9 220.4 456.9 225.5 457.7 230.3 C458.4 235.1 457.9 241.1 457.5 246.0 C457.1 250.9 456.1 256.0 455.0 260.0 C453.9 264.0 451.7 268.3 451.0 270.0" stroke="url(#fyh)" stroke-width="1.2" transform="translate(-0.50 -0.15)" opacity=".62"/>
<path d="M409.0 187.4 C407.2 187.2 401.6 186.3 398.0 186.5 C394.4 186.7 391.7 186.1 387.7 188.5 C383.7 190.9 377.4 195.9 374.0 201.0 C370.6 206.1 368.7 212.2 367.4 219.0 C366.1 225.8 366.1 234.4 366.3 241.6 C366.5 248.8 367.4 256.9 368.5 262.0 C369.6 267.1 371.4 269.2 373.0 272.0 C374.6 274.8 377.2 277.8 378.0 279.0" stroke="url(#fyd)" stroke-width="3.6"/>
<path d="M409.0 187.4 C407.2 187.2 401.6 186.3 398.0 186.5 C394.4 186.7 391.7 186.1 387.7 188.5 C383.7 190.9 377.4 195.9 374.0 201.0 C370.6 206.1 368.7 212.2 367.4 219.0 C366.1 225.8 366.1 234.4 366.3 241.6 C366.5 248.8 367.4 256.9 368.5 262.0 C369.6 267.1 371.4 269.2 373.0 272.0 C374.6 274.8 377.2 277.8 378.0 279.0" stroke="url(#fy)" stroke-width="2.6"/>
<path d="M409.0 187.4 C407.2 187.2 401.6 186.3 398.0 186.5 C394.4 186.7 391.7 186.1 387.7 188.5 C383.7 190.9 377.4 195.9 374.0 201.0 C370.6 206.1 368.7 212.2 367.4 219.0 C366.1 225.8 366.1 234.4 366.3 241.6 C366.5 248.8 367.4 256.9 368.5 262.0 C369.6 267.1 371.4 269.2 373.0 272.0 C374.6 274.8 377.2 277.8 378.0 279.0" stroke="url(#fyh)" stroke-width="1.2" transform="translate(-0.50 -0.15)" opacity=".62"/>
<path d="M409.5 188.2 C407.8 188.2 402.2 187.6 399.0 188.0 C395.8 188.4 393.5 188.2 390.0 190.5 C386.5 192.8 381.1 197.2 378.0 202.0 C374.9 206.8 372.8 212.5 371.5 219.0 C370.2 225.5 369.9 234.5 370.0 241.0 C370.1 247.5 371.0 253.5 372.0 258.0 C373.0 262.5 375.3 266.3 376.0 268.0" stroke="url(#fyd)" stroke-width="3.6"/>
<path d="M409.5 188.2 C407.8 188.2 402.2 187.6 399.0 188.0 C395.8 188.4 393.5 188.2 390.0 190.5 C386.5 192.8 381.1 197.2 378.0 202.0 C374.9 206.8 372.8 212.5 371.5 219.0 C370.2 225.5 369.9 234.5 370.0 241.0 C370.1 247.5 371.0 253.5 372.0 258.0 C373.0 262.5 375.3 266.3 376.0 268.0" stroke="url(#fy)" stroke-width="2.6"/>
<path d="M409.5 188.2 C407.8 188.2 402.2 187.6 399.0 188.0 C395.8 188.4 393.5 188.2 390.0 190.5 C386.5 192.8 381.1 197.2 378.0 202.0 C374.9 206.8 372.8 212.5 371.5 219.0 C370.2 225.5 369.9 234.5 370.0 241.0 C370.1 247.5 371.0 253.5 372.0 258.0 C373.0 262.5 375.3 266.3 376.0 268.0" stroke="url(#fyh)" stroke-width="1.2" transform="translate(-0.50 -0.15)" opacity=".62"/>
<path d="M409.0 189.0 C407.5 189.1 402.8 189.2 400.0 189.5 C397.2 189.8 395.4 188.6 392.2 190.8 C389.0 193.1 383.8 198.3 381.0 203.0 C378.2 207.7 376.5 212.6 375.3 219.0 C374.1 225.4 373.5 234.4 373.7 241.6 C373.9 248.8 375.2 256.8 376.4 262.0 C377.6 267.2 379.2 269.8 381.0 273.0 C382.8 276.2 386.0 279.7 387.0 281.0" stroke="url(#fyd)" stroke-width="3.6"/>
<path d="M409.0 189.0 C407.5 189.1 402.8 189.2 400.0 189.5 C397.2 189.8 395.4 188.6 392.2 190.8 C389.0 193.1 383.8 198.3 381.0 203.0 C378.2 207.7 376.5 212.6 375.3 219.0 C374.1 225.4 373.5 234.4 373.7 241.6 C373.9 248.8 375.2 256.8 376.4 262.0 C377.6 267.2 379.2 269.8 381.0 273.0 C382.8 276.2 386.0 279.7 387.0 281.0" stroke="url(#fy)" stroke-width="2.6"/>
<path d="M409.0 189.0 C407.5 189.1 402.8 189.2 400.0 189.5 C397.2 189.8 395.4 188.6 392.2 190.8 C389.0 193.1 383.8 198.3 381.0 203.0 C378.2 207.7 376.5 212.6 375.3 219.0 C374.1 225.4 373.5 234.4 373.7 241.6 C373.9 248.8 375.2 256.8 376.4 262.0 C377.6 267.2 379.2 269.8 381.0 273.0 C382.8 276.2 386.0 279.7 387.0 281.0" stroke="url(#fyh)" stroke-width="1.2" transform="translate(-0.50 -0.15)" opacity=".62"/>
<path d="M410.0 190.0 C408.7 190.1 404.2 190.1 402.0 190.5 C399.8 190.9 398.9 189.9 396.7 192.4 C394.5 194.9 390.7 201.1 388.8 205.5 C386.9 209.9 386.3 213.8 385.5 219.0 C384.7 224.2 383.7 229.8 383.9 237.0 C384.1 244.2 385.4 255.8 386.6 262.0 C387.8 268.2 389.4 270.7 391.0 274.0 C392.6 277.3 395.2 280.7 396.0 282.0" stroke="url(#fyd)" stroke-width="3.6"/>
<path d="M410.0 190.0 C408.7 190.1 404.2 190.1 402.0 190.5 C399.8 190.9 398.9 189.9 396.7 192.4 C394.5 194.9 390.7 201.1 388.8 205.5 C386.9 209.9 386.3 213.8 385.5 219.0 C384.7 224.2 383.7 229.8 383.9 237.0 C384.1 244.2 385.4 255.8 386.6 262.0 C387.8 268.2 389.4 270.7 391.0 274.0 C392.6 277.3 395.2 280.7 396.0 282.0" stroke="url(#fy)" stroke-width="2.6"/>
<path d="M410.0 190.0 C408.7 190.1 404.2 190.1 402.0 190.5 C399.8 190.9 398.9 189.9 396.7 192.4 C394.5 194.9 390.7 201.1 388.8 205.5 C386.9 209.9 386.3 213.8 385.5 219.0 C384.7 224.2 383.7 229.8 383.9 237.0 C384.1 244.2 385.4 255.8 386.6 262.0 C387.8 268.2 389.4 270.7 391.0 274.0 C392.6 277.3 395.2 280.7 396.0 282.0" stroke="url(#fyh)" stroke-width="1.2" transform="translate(-0.50 -0.15)" opacity=".62"/>
<path d="M410.0 191.5 C408.8 191.8 405.0 191.9 403.0 193.0 C401.0 194.1 399.8 195.2 398.0 198.0 C396.2 200.8 393.4 205.7 392.0 210.0 C390.6 214.3 390.0 219.0 389.5 224.0 C389.0 229.0 388.8 235.0 389.0 240.0 C389.2 245.0 390.7 251.7 391.0 254.0" stroke="url(#fyd)" stroke-width="3.6"/>
<path d="M410.0 191.5 C408.8 191.8 405.0 191.9 403.0 193.0 C401.0 194.1 399.8 195.2 398.0 198.0 C396.2 200.8 393.4 205.7 392.0 210.0 C390.6 214.3 390.0 219.0 389.5 224.0 C389.0 229.0 388.8 235.0 389.0 240.0 C389.2 245.0 390.7 251.7 391.0 254.0" stroke="url(#fy)" stroke-width="2.6"/>
<path d="M410.0 191.5 C408.8 191.8 405.0 191.9 403.0 193.0 C401.0 194.1 399.8 195.2 398.0 198.0 C396.2 200.8 393.4 205.7 392.0 210.0 C390.6 214.3 390.0 219.0 389.5 224.0 C389.0 229.0 388.8 235.0 389.0 240.0 C389.2 245.0 390.7 251.7 391.0 254.0" stroke="url(#fyh)" stroke-width="1.2" transform="translate(-0.50 -0.15)" opacity=".62"/>
<path d="M407.3 218.0 C407.3 220.8 407.1 228.8 407.5 235.0 C407.9 241.2 408.8 249.2 410.0 255.0 C411.2 260.8 413.0 265.8 415.0 270.0 C417.0 274.2 420.8 278.3 422.0 280.0" stroke="url(#fyd)" stroke-width="3.5"/>
<path d="M407.3 218.0 C407.3 220.8 407.1 228.8 407.5 235.0 C407.9 241.2 408.8 249.2 410.0 255.0 C411.2 260.8 413.0 265.8 415.0 270.0 C417.0 274.2 420.8 278.3 422.0 280.0" stroke="url(#fy)" stroke-width="2.5"/>
<path d="M407.3 218.0 C407.3 220.8 407.1 228.8 407.5 235.0 C407.9 241.2 408.8 249.2 410.0 255.0 C411.2 260.8 413.0 265.8 415.0 270.0 C417.0 274.2 420.8 278.3 422.0 280.0" stroke="url(#fyh)" stroke-width="1.2" transform="translate(-0.50 -0.15)" opacity=".62"/>
<path d="M414.8 182.9 C415.7 183.8 418.1 185.4 420.0 188.0 C421.9 190.6 423.9 193.9 426.0 198.7 C428.1 203.5 431.0 210.3 432.9 216.7 C434.8 223.1 435.7 230.2 437.4 237.0 C439.1 243.8 441.4 251.6 443.0 257.4 C444.6 263.2 445.5 267.9 447.0 272.0 C448.5 276.1 451.2 280.3 452.0 282.0" stroke="url(#fyd)" stroke-width="3.6"/>
<path d="M414.8 182.9 C415.7 183.8 418.1 185.4 420.0 188.0 C421.9 190.6 423.9 193.9 426.0 198.7 C428.1 203.5 431.0 210.3 432.9 216.7 C434.8 223.1 435.7 230.2 437.4 237.0 C439.1 243.8 441.4 251.6 443.0 257.4 C444.6 263.2 445.5 267.9 447.0 272.0 C448.5 276.1 451.2 280.3 452.0 282.0" stroke="url(#fy)" stroke-width="2.6"/>
<path d="M414.8 182.9 C415.7 183.8 418.1 185.4 420.0 188.0 C421.9 190.6 423.9 193.9 426.0 198.7 C428.1 203.5 431.0 210.3 432.9 216.7 C434.8 223.1 435.7 230.2 437.4 237.0 C439.1 243.8 441.4 251.6 443.0 257.4 C444.6 263.2 445.5 267.9 447.0 272.0 C448.5 276.1 451.2 280.3 452.0 282.0" stroke="url(#fyh)" stroke-width="1.2" transform="translate(-0.50 -0.15)" opacity=".62"/>
</g>
<g stroke="#e2e2e2" stroke-width=".85" fill="none">
<path d="M302.5 126.3 L464.5 106.3 L531.3 161.3 L512 423.3 L357 460 L323 371.4 Z"/>
<path d="M327.8 120.4 L328.2 125.4"/>
<path d="M356.8 116.9 L357.2 121.9"/>
<path d="M385.2 113.4 L385.8 118.4"/>
<path d="M413.1 110.0 L413.6 115.0"/>
<path d="M440.6 106.6 L441.1 111.6"/>
<path d="M300.1 128.3 L305.3 127.7"/>
<path d="M302.4 157.1 L307.6 156.5"/>
<path d="M304.8 184.1 L310.0 183.5"/>
<path d="M307.1 210.8 L312.3 210.2"/>
<path d="M309.2 236.6 L314.4 236.0"/>
<path d="M311.2 260.8 L316.4 260.2"/>
<path d="M313.2 284.8 L318.4 284.2"/>
<path d="M315.1 307.3 L320.3 306.7"/>
<path d="M317.0 329.6 L322.2 329.0"/>
<path d="M318.8 350.8 L324.0 350.2"/>
<path d="M320.4 371.6 L325.6 371.0"/>
<path d="M528.5 191.8 L529.0 196.8"/>
<path d="M526.4 221.3 L526.9 226.3"/>
<path d="M524.2 250.0 L524.8 255.0"/>
<path d="M522.2 277.5 L522.8 282.5"/>
<path d="M520.4 303.8 L520.9 308.8"/>
<path d="M518.5 328.8 L519.0 333.8"/>
<path d="M516.6 353.3 L517.1 358.3"/>
<path d="M515.0 377.0 L515.5 382.0"/>
<path d="M513.4 399.3 L513.9 404.3"/>
<path d="M497.8 130.8 L498.2 135.8"/>
<path d="M465.1 104.5 L465.6 109.5"/>
<path d="M322.1 378.6 L327.1 377.4"/>
<path d="M337.1 418.1 L342.1 416.9"/>
<path d="M502.1 423.1 L502.9 427.9"/>
<path d="M437.1 438.6 L437.9 443.4"/>
<path d="M367.6 455.0 L368.4 459.8"/>
</g>
<g fill="#c6c6c6">
<text transform="translate(385.0 99.8) scale(1 1.10)" font-size="5.70" text-anchor="middle">X Axis</text>
<text transform="translate(328.8 117.5) scale(1 1.10)" font-size="5.70" text-anchor="middle">-4</text>
<text transform="translate(357.0 114.2) scale(1 1.10)" font-size="5.70" text-anchor="middle">-2</text>
<text transform="translate(385.3 110.2) scale(1 1.10)" font-size="5.70" text-anchor="middle">0</text>
<text transform="translate(413.3 106.7) scale(1 1.10)" font-size="5.70" text-anchor="middle">2</text>
<text transform="translate(441.0 103.5) scale(1 1.10)" font-size="5.70" text-anchor="middle">4</text>
<text transform="translate(468.8 104.0) scale(1 1.10)" font-size="5.70" text-anchor="middle">5</text>
<text transform="translate(294.3 130.5) scale(1 1.10)" font-size="5.70" text-anchor="middle">10</text>
<text transform="translate(298.3 159.2) scale(1 1.10)" font-size="5.70" text-anchor="middle">8</text>
<text transform="translate(300.5 186.2) scale(1 1.10)" font-size="5.70" text-anchor="middle">6</text>
<text transform="translate(303.0 212.7) scale(1 1.10)" font-size="5.70" text-anchor="middle">4</text>
<text transform="translate(304.5 238.7) scale(1 1.10)" font-size="5.70" text-anchor="middle">2</text>
<text transform="translate(306.5 263.0) scale(1 1.10)" font-size="5.70" text-anchor="middle">0</text>
<text transform="translate(307.5 287.0) scale(1 1.10)" font-size="5.70" text-anchor="middle">-2</text>
<text transform="translate(309.5 309.5) scale(1 1.10)" font-size="5.70" text-anchor="middle">-4</text>
<text transform="translate(311.8 331.7) scale(1 1.10)" font-size="5.70" text-anchor="middle">-6</text>
<text transform="translate(313.3 353.0) scale(1 1.10)" font-size="5.70" text-anchor="middle">-8</text>
<text transform="translate(313.8 373.5) scale(1 1.10)" font-size="5.70" text-anchor="middle">-10</text>
<text transform="translate(290.8 263.5) scale(1 1.10)" font-size="5.70" text-anchor="middle">Z Axis</text>
<text transform="translate(495.0 115.0) scale(1 1.10)" font-size="5.70" text-anchor="middle">Y Axis</text>
<text transform="translate(498.0 127.7) scale(1 1.10)" font-size="5.70" text-anchor="middle">0</text>
<text transform="translate(537.5 170.5) scale(1 1.10)" font-size="5.70" text-anchor="middle">10</text>
<text transform="translate(532.8 201.7) scale(1 1.10)" font-size="5.70" text-anchor="middle">8</text>
<text transform="translate(530.5 231.7) scale(1 1.10)" font-size="5.70" text-anchor="middle">6</text>
<text transform="translate(529.0 260.2) scale(1 1.10)" font-size="5.70" text-anchor="middle">4</text>
<text transform="translate(527.0 287.7) scale(1 1.10)" font-size="5.70" text-anchor="middle">2</text>
<text transform="translate(525.0 314.0) scale(1 1.10)" font-size="5.70" text-anchor="middle">0</text>
<text transform="translate(524.3 339.7) scale(1 1.10)" font-size="5.70" text-anchor="middle">-2</text>
<text transform="translate(522.5 364.0) scale(1 1.10)" font-size="5.70" text-anchor="middle">-4</text>
<text transform="translate(521.0 387.7) scale(1 1.10)" font-size="5.70" text-anchor="middle">-6</text>
<text transform="translate(519.3 410.2) scale(1 1.10)" font-size="5.70" text-anchor="middle">-8</text>
<text transform="translate(519.5 431.5) scale(1 1.10)" font-size="5.70" text-anchor="middle">-10</text>
<text transform="translate(538.3 321.0) scale(1 1.10)" font-size="5.70" text-anchor="middle">Z Axis</text>
<text transform="translate(318.0 381.0) scale(1 1.10)" font-size="5.70" text-anchor="middle">5</text>
<text transform="translate(316.3 417.7) scale(1 1.10)" font-size="5.70" text-anchor="middle">Y Axis</text>
<text transform="translate(334.0 419.7) scale(1 1.10)" font-size="5.70" text-anchor="middle">0</text>
<text transform="translate(505.0 436.0) scale(1 1.10)" font-size="5.70" text-anchor="middle">5</text>
<text transform="translate(440.0 450.7) scale(1 1.10)" font-size="5.70" text-anchor="middle">0</text>
<text transform="translate(451.3 459.2) scale(1 1.10)" font-size="5.70" text-anchor="middle">X Axis</text>
<text transform="translate(372.5 466.5) scale(1 1.10)" font-size="5.70" text-anchor="middle">-5</text>
</g>
<rect x="270.5" y="496.3" width="245.3" height="7.5" fill="url(#lgA)"/>
<g stroke="#e6e6e6" stroke-width=".8">
<path d="M270.7 492.4 V497"/>
<path d="M305.5 492.4 V497"/>
<path d="M331.5 492.4 V497"/>
<path d="M357.0 492.4 V497"/>
<path d="M382.2 492.4 V497"/>
<path d="M408.5 492.4 V497"/>
<path d="M433.8 492.4 V497"/>
<path d="M459.0 492.4 V497"/>
<path d="M484.3 492.4 V497"/>
<path d="M515.6 492.4 V497"/>
</g>
<g fill="#e8e8e8">
<text transform="translate(392.5 477.9) scale(1 1.10)" font-size="7.40" text-anchor="middle">AsH3</text>
<text transform="translate(272.3 489.2) scale(1 1.10)" font-size="7.60" text-anchor="middle">8.6e-02</text>
<text transform="translate(305.5 489.2) scale(1 1.10)" font-size="7.60" text-anchor="middle">0.1</text>
<text transform="translate(331.8 489.2) scale(1 1.10)" font-size="7.60" text-anchor="middle">0.11</text>
<text transform="translate(357.0 489.2) scale(1 1.10)" font-size="7.60" text-anchor="middle">0.12</text>
<text transform="translate(382.5 489.2) scale(1 1.10)" font-size="7.60" text-anchor="middle">0.13</text>
<text transform="translate(408.8 489.2) scale(1 1.10)" font-size="7.60" text-anchor="middle">0.14</text>
<text transform="translate(433.8 489.2) scale(1 1.10)" font-size="7.60" text-anchor="middle">0.15</text>
<text transform="translate(458.8 489.2) scale(1 1.10)" font-size="7.60" text-anchor="middle">0.16</text>
<text transform="translate(484.3 489.2) scale(1 1.10)" font-size="7.60" text-anchor="middle">0.17</text>
<text transform="translate(516.2 489.2) scale(1 1.10)" font-size="7.60" text-anchor="middle">1.8e-01</text>
</g>
<rect x="691" y="102.2" width="8.1" height="143" fill="url(#lgP)"/>
<g stroke="#e6e6e6" stroke-width=".8">
<path d="M698 102.5 H703.5"/>
<path d="M698 127.0 H703.5"/>
<path d="M698 159.2 H703.5"/>
<path d="M698 191.5 H703.5"/>
<path d="M698 223.9 H703.5"/>
<path d="M698 245.0 H703.5"/>
</g>
<g fill="#e8e8e8">
<text transform="translate(706.0 105.2) scale(1 1.10)" font-size="8.15" text-anchor="start">2.9e-02</text>
<text transform="translate(706.0 129.7) scale(1 1.10)" font-size="8.15" text-anchor="start">0.025</text>
<text transform="translate(706.0 161.9) scale(1 1.10)" font-size="8.15" text-anchor="start">0.02</text>
<text transform="translate(706.0 194.2) scale(1 1.10)" font-size="8.15" text-anchor="start">0.015</text>
<text transform="translate(706.0 226.6) scale(1 1.10)" font-size="8.15" text-anchor="start">0.01</text>
<text transform="translate(706.0 247.7) scale(1 1.10)" font-size="8.15" text-anchor="start">6.8e-03</text>
<text transform="translate(743.3 173.8) rotate(-90) scale(1 1.08)" text-anchor="middle" font-size="7.4">Pres</text>
</g>
<rect x="686.3" y="297.1" width="8.4" height="142.8" fill="url(#lgV)"/>
<g stroke="#e6e6e6" stroke-width=".8">
<path d="M693.8 297.4 H698.7"/>
<path d="M693.8 312.3 H698.7"/>
<path d="M693.8 344.4 H698.7"/>
<path d="M693.8 376.5 H698.7"/>
<path d="M693.8 408.8 H698.7"/>
<path d="M693.8 439.7 H698.7"/>
</g>
<g fill="#e8e8e8">
<text transform="translate(701.6 300.1) scale(1 1.10)" font-size="8.15" text-anchor="start">2.2e+01</text>
<text transform="translate(701.6 315.0) scale(1 1.10)" font-size="8.15" text-anchor="start">20</text>
<text transform="translate(701.6 347.1) scale(1 1.10)" font-size="8.15" text-anchor="start">15</text>
<text transform="translate(701.6 379.2) scale(1 1.10)" font-size="8.15" text-anchor="start">10</text>
<text transform="translate(701.6 411.5) scale(1 1.10)" font-size="8.15" text-anchor="start">5</text>
<text transform="translate(701.6 442.4) scale(1 1.10)" font-size="8.15" text-anchor="start">6.8e-02</text>
<text transform="translate(741.8 368.2) rotate(-90) scale(1 1.08)" text-anchor="middle" font-size="9.1">V Magnitude</text>
</g>
</svg>
<svg style="left:0;top:0" width="800" height="549" viewBox="0 0 800 549" font-family="Liberation Sans, sans-serif" font-size="7.6">
  <defs>
    <linearGradient id="cw" x1="0" x2="1" y1="0" y2="0">
      <stop offset="0" stop-color="#2c3ea6"/><stop offset=".2" stop-color="#5373c6"/><stop offset=".4" stop-color="#8fa4cc"/><stop offset=".5" stop-color="#b0b0b0"/><stop offset=".62" stop-color="#cba08c"/><stop offset=".75" stop-color="#c97258"/><stop offset=".9" stop-color="#aa3430"/><stop offset="1" stop-color="#8c0c22"/>
    </linearGradient>
    <g id="trash"><path d="M-3.1 -2.3 h6.2 v1 h-6.2z M-1.2 -3.3 h2.4 v.9 h-2.4z M-2.6 -1 h5.2 l-.4 4.4 h-4.4z"/><path d="M-1.2 -.2 v2.8 M0 -.2 v2.8 M1.2 -.2 v2.8" stroke="#b4b4b4" stroke-width=".5"/></g>
    <g id="ud"><path d="M0 -.9 l-1.7 -0 l1.7 -2.3 l1.7 2.3z M0 .9 l-1.7 0 l1.7 2.3 l1.7 -2.3z"/></g>
    <g id="q"><circle r="3.3" fill="#6c6c6c"/><text x="0" y="2.2" font-size="6" font-weight="bold" text-anchor="middle" fill="#b4b4b4">?</text></g>
  </defs>
  <rect x="33.4" y="78.2" width="152.6" height="424.7" rx="3.2" fill="#b4b4b4"/>
  <!-- toolbar -->
  <rect x="33.7" y="93.6" width="152.3" height=".7" fill="#a6a6a6"/>
  <!-- pipeline icon -->
  <g stroke="#1c1c1c" stroke-width="1.1" fill="none">
    <path d="M43.6 82.6 V89.4"/><path d="M43.6 87.4 C43.6 85.2 47.4 84.8 47.4 87.6 V88.6"/>
  </g>
  <circle cx="43.6" cy="82.6" r="1.05" fill="#1c1c1c"/><circle cx="43.6" cy="89.6" r="1.05" fill="#1c1c1c"/><circle cx="47.4" cy="88.8" r="1.05" fill="#1c1c1c"/>
  <!-- file icon -->
  <path d="M60.3 81.2 h5.6 l2.6 2.6 v6.6 h-8.2z M65.9 81.2 v2.6 h2.6" fill="none" stroke="#7a7a7a" stroke-width=".7"/>
  <path d="M62.2 85.4 h4.6 M62.2 86.8 h4.6 M62.2 88.2 h4.6" stroke="#7a7a7a" stroke-width=".7"/>
  <!-- plus -->
  <path d="M78.3 85.8 h7.4 M82 82.1 v7.4" stroke="#3e3e3e" stroke-width="1.6"/>
  <!-- hdd -->
  <path d="M97.5 82.8 h5.6 l1.7 3.6 v2.9 h-9 v-2.9z M95.8 86.4 h9" fill="none" stroke="#7a7a7a" stroke-width=".75" stroke-linejoin="round"/>
  <path d="M101.5 88 h2" stroke="#7a7a7a" stroke-width=".7"/>
  <!-- info -->
  <circle cx="117.9" cy="82.8" r="1" fill="#444"/>
  <path d="M116.5 84.9 h2.2 v3.9 h.9 v.9 h-3.4 v-.9 h.9 v-3 h-.6z" fill="#444"/>
  <!-- gears -->
  <g fill="none" stroke="#555">
    <circle cx="156.8" cy="86.2" r="2.3" stroke-width="1.5"/>
    <circle cx="156.8" cy="86.2" r="3.5" stroke-width="1.5" stroke-dasharray="1.4 1.35"/>
    <circle cx="162" cy="82.8" r="1.2" stroke-width=".8"/>
    <circle cx="162" cy="89.5" r="1.2" stroke-width=".8"/>
  </g>
  <rect x="168" y="80.5" width=".6" height="11.5" fill="#c4c4c4"/>
  <!-- expand -->
  <path d="M171.8 81.9 h3.3 l-1.05 1.05 2.35 2.3 2.35 -2.3 -1.05 -1.05 h3.3 v3.3 l-1.05 -1.05 -2.35 2.25 2.35 2.25 1.05 -1.05 v3.3 h-3.3 l1.05 -1.05 -2.35 -2.3 -2.35 2.3 1.05 1.05 h-3.3 v-3.3 l1.05 1.05 2.35 -2.25 -2.35 -2.25 -1.05 1.05z" fill="#0a0a0a"/>
  <!-- selected row -->
  <rect x="35.8" y="159" width="149.4" height="12.6" fill="#737373"/>
  <!-- pipeline graph -->
  <g fill="none" stroke-width="1.5">
    <path d="M43.1 108 C43.1 113 53.1 110 53.1 117 V150" stroke="#3b72b4"/>
    <path d="M43.1 108 C43.1 112.5 63.5 109.5 63.5 116 V134.8" stroke="#1e8a4a"/>
    <path d="M43.1 108 V165.2" stroke="#c8203f"/>
  </g>
  <circle cx="43.1" cy="104.5" r="3.05" fill="#dedede" stroke="#c8203f" stroke-width="1.6"/>
  <circle cx="63.5" cy="119.6" r="3.05" fill="#dedede" stroke="#1e8a4a" stroke-width="1.6"/>
  <circle cx="63.5" cy="134.8" r="3.8" fill="#1e8a4a"/>
  <circle cx="53.1" cy="150.1" r="3.8" fill="#3b72b4"/>
  <circle cx="43.1" cy="165.2" r="3.2" fill="#d1052a" stroke="#000" stroke-width="1.2"/>
  <g font-size="7.8" fill="#111">
    <text x="49.2" y="106.9">disk_out_ref.ex*</text>
    <text x="69.6" y="122">StreamTracer1</text>
    <text x="69.7" y="137.1">Tube1</text>
    <text x="59.4" y="152.4">Contour1</text>
    <text x="49.3" y="167.6" font-weight="bold" fill="#e8e8e8">Clip1</text>
  </g>
  <use href="#trash" x="175.5" y="134.6" fill="#2a2a2a"/>
  <use href="#trash" x="175.5" y="149.9" fill="#2a2a2a"/>
  <g fill="#c9c9c9"><path transform="translate(175.5 165)" d="M-3.1 -2.3 h6.2 v1 h-6.2z M-1.2 -3.3 h2.4 v.9 h-2.4z M-2.6 -1 h5.2 l-.4 4.4 h-4.4z"/><path transform="translate(175.5 165)" d="M-1.2 -.2 v2.8 M0 -.2 v2.8 M1.2 -.2 v2.8" stroke="#8a8a8a" stroke-width=".5"/></g>
  <!-- filter bar -->
  <rect x="33.7" y="208.2" width="152.3" height="15.8" fill="#a9a9a9"/>
  <rect x="33.7" y="208" width="152.3" height=".6" fill="#9c9c9c"/>
  <rect x="52.5" y="211.3" width="114.7" height="10.4" rx="5.2" fill="#bdbdbd"/>
  <text x="59.8" y="219.2" fill="#5e5e5e">filter properties...</text>
  <!-- wrench -->
  <path d="M40.6 220 l4 -4.2" stroke="#8c8c8c" stroke-width="1.1" fill="none"/>
  <path d="M44.4 213 a2 2 0 1 0 2.4 2.6 l-1.3 .2 -.9 -1 z" fill="#8c8c8c"/>
  <!-- paper plane -->
  <path d="M172.8 217.2 l7.6 -4.2 -1.6 7.4 -2.1 -1.5 -1.2 1.6 v-2.4 l3.4 -3.6 -4.3 3.4z" fill="#8f8f8f"/>
  <!-- representation select -->
  <rect x="49.4" y="232" width="129.9" height="13.2" rx="2" fill="#c3c3c3"/>
  <rect x="49.8" y="245.2" width="129.1" height=".8" fill="#999"/>
  <text x="53.6" y="241.4" fill="#111">Surface</text>
  <use href="#ud" x="175.3" y="238.7" fill="#111"/>
  <!-- eye -->
  <path d="M39.8 238.8 C41.6 236 46 236 47.8 238.8 C46 241.6 41.6 241.6 39.8 238.8Z" fill="#2e2e2e"/>
  <circle cx="43.8" cy="238.6" r="1.5" fill="#b4b4b4"/><circle cx="43.8" cy="238.6" r=".8" fill="#2e2e2e"/>
  <!-- color by select -->
  <rect x="49.4" y="251.2" width="129.9" height="13.2" rx="2" fill="#c3c3c3"/>
  <rect x="49.8" y="264.4" width="129.1" height=".8" fill="#999"/>
  <text x="53.6" y="260.6" fill="#111">(p3) V</text>
  <use href="#ud" x="175.3" y="257.9" fill="#111"/>
  <!-- drop -->
  <path d="M43.8 254.6 C44.6 256.2 45.9 257.3 45.9 258.8 A2.1 2.1 0 0 1 41.7 258.8 C41.7 257.3 43 256.2 43.8 254.6Z" fill="#1e1e1e"/>
  <!-- color bar -->
  <rect x="48.6" y="272.1" width="123.4" height="8.7" fill="#555"/>
  <rect x="49" y="272.6" width="122.6" height="7.7" fill="url(#cw)"/>
  <circle cx="43.6" cy="276.6" r="2.1" fill="none" stroke="#8e8e8e" stroke-width="1.1" stroke-dasharray="1 .65"/>
  <path d="M174.2 273 h4.7 v6.4 l-2.35 -1.7 -2.35 1.7z" fill="#0c0c0c"/>
  <!-- Source bar -->
  <rect x="33.7" y="289.4" width="152.3" height="15.3" fill="#a8a8a8"/>
  <rect x="33.7" y="289.2" width="152.3" height=".6" fill="#9e9e9e"/>
  <rect x="33.7" y="304.4" width="152.3" height=".6" fill="#9e9e9e"/>
  <rect x="40" y="296.1" width="5.6" height="1.5" fill="#111"/>
  <text x="106.9" y="299.8" text-anchor="middle" fill="#1c1c1c">Source</text>
  <!-- Clip type -->
  <text x="39.6" y="319.2" font-weight="bold" fill="#111">Clip Type</text>
  <use href="#q" x="175.2" y="316.4"/>
  <rect x="39.9" y="324.4" width="139.3" height="12.6" rx="2" fill="#c3c3c3"/>
  <rect x="40.3" y="337" width="138.5" height=".8" fill="#999"/>
  <text x="43.8" y="333.5" fill="#111">Plane</text>
  <use href="#ud" x="175.4" y="330.7" fill="#111"/>
  <!-- Offset -->
  <text x="39.6" y="353.1" font-weight="bold" fill="#111">Offset</text>
  <use href="#q" x="175.2" y="350.4"/>
  <rect x="41.8" y="364.6" width="135.4" height="12.6" fill="#c1c1c1"/>
  <rect x="41.8" y="377.2" width="135.4" height=".7" fill="#9d9d9d"/>
  <text x="45.8" y="373.6" fill="#111">2</text>
  <!-- Plane parameters -->
  <text x="39.6" y="396.3" font-weight="bold" fill="#111">Plane Parameters</text>
  <rect x="39.2" y="398.7" width="140.5" height=".9" fill="#1e1e1e"/>
  <text x="39.6" y="416" font-weight="bold" fill="#111">Origin</text>
  <use href="#q" x="175.2" y="413.3"/>
  <g fill="#c1c1c1"><rect x="41.8" y="427.5" width="43.4" height="12.8"/><rect x="88" y="427.5" width="43" height="12.8"/><rect x="134.1" y="427.5" width="43.4" height="12.8"/>
  <rect x="41.8" y="467.9" width="43.4" height="12.3"/><rect x="88" y="467.9" width="43" height="12.3"/><rect x="134.1" y="467.9" width="43.4" height="12.3"/></g>
  <g fill="#9d9d9d"><rect x="41.8" y="440.3" width="43.4" height=".7"/><rect x="88" y="440.3" width="43" height=".7"/><rect x="134.1" y="440.3" width="43.4" height=".7"/>
  <rect x="41.8" y="480.2" width="43.4" height=".7"/><rect x="88" y="480.2" width="43" height=".7"/><rect x="134.1" y="480.2" width="43.4" height=".7"/></g>
  <g fill="#111">
    <text x="45.8" y="436.7">0</text><text x="91.8" y="436.7">0</text><text x="137.8" y="436.7">0.0799999</text>
    <text x="39.6" y="455.9" font-weight="bold">Normal</text>
    <text x="45.8" y="476.7">0</text><text x="91.8" y="476.7">0.7</text><text x="137.8" y="476.7">-0.4</text>
    <text x="39.6" y="500.2" font-weight="bold">Inside Out</text>
  </g>
  <use href="#q" x="175.2" y="453.2"/>
  <use href="#q" x="175.2" y="497.4"/>
  <!-- orientation axes -->
  <g opacity=".75">
    <path d="M82.8 453.4 L108.5 447.8" stroke="#e47a7a" stroke-width=".7"/>
    <path d="M107 446.6 l3 .9 -2.4 1.7z" fill="#e47a7a"/>
    <path d="M82.8 453.4 L82.6 430" stroke="#7fd47f" stroke-width=".7"/>
    <path d="M80.8 433.6 l1.8 -7.2 1.8 7.2z" fill="#7fd47f"/>
    <path d="M82.8 453.4 L76.6 444.6" stroke="#d8d080" stroke-width=".7"/>
    <circle cx="75.8" cy="443.2" r="1.7" fill="#e6dc78"/>
  </g>
  <g fill="#e8e8e8" font-size="7">
    <text x="83.6" y="431.5">Z</text><text x="106.4" y="450">X</text><text x="77" y="443" font-size="6">Y</text>
  </g>
</svg>
</div></div>
</body>
</html>
